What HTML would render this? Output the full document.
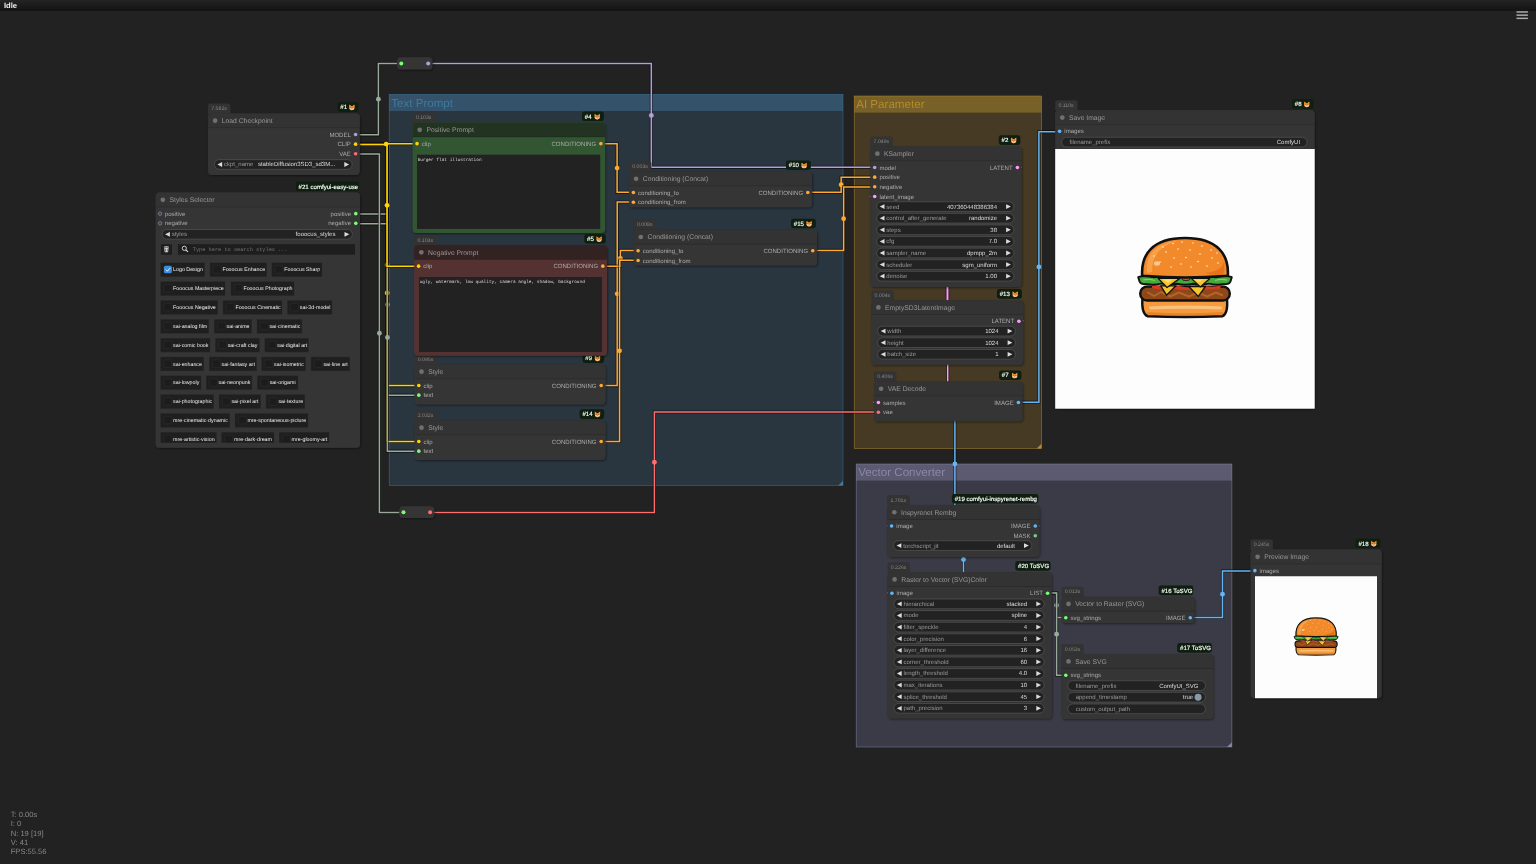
<!DOCTYPE html><html><head><meta charset="utf-8"><style>html,body{margin:0;padding:0;background:#222;overflow:hidden;width:1536px;height:864px}svg{display:block;will-change:transform;text-rendering:geometricPrecision}</style></head><body>
<svg width="1536" height="864" viewBox="0 0 1536 864">
<defs><filter id="sh" x="-10%" y="-10%" width="120%" height="130%"><feDropShadow dx="0.8" dy="1" stdDeviation="1.2" flood-color="#000" flood-opacity="0.45"/></filter><linearGradient id="topbar" x1="0" y1="0" x2="0" y2="1"><stop offset="0" stop-color="#242424"/><stop offset="1" stop-color="#121212"/></linearGradient><clipPath id="stylesclip"><rect x="156" y="240" width="204" height="202.8"/></clipPath></defs>
<rect width="1536" height="864" fill="#222"/>
<rect x="389.2" y="94.4" width="453.8" height="391.1" fill="#29353f"/>
<rect x="389.2" y="94.4" width="453.8" height="16.6" fill="#34536a"/>
<rect x="389.2" y="94.4" width="453.8" height="391.1" fill="none" stroke="#3f789e" stroke-width="0.6" stroke-opacity="0.8"/>
<path d="M843.0 485.5 l-4.8 0 l4.8 -4.8z" fill="#3f789e"/>
<text x="391.20" y="106.80" font-size="11.60" fill="#3f789e" text-anchor="start" font-family='"Liberation Sans", sans-serif' font-weight="normal" >Text Prompt</text>
<rect x="854.2" y="96.0" width="187.3" height="352.5" fill="#463a24"/>
<rect x="854.2" y="96.0" width="187.3" height="16.6" fill="#786128"/>
<rect x="854.2" y="96.0" width="187.3" height="352.5" fill="none" stroke="#b58b2a" stroke-width="0.6" stroke-opacity="0.8"/>
<path d="M1041.5 448.5 l-4.8 0 l4.8 -4.8z" fill="#b58b2a"/>
<text x="856.20" y="108.40" font-size="11.60" fill="#b58b2a" text-anchor="start" font-family='"Liberation Sans", sans-serif' font-weight="normal" >AI Parameter</text>
<rect x="856.2" y="464.0" width="375.7" height="283.0" fill="#3b3b47"/>
<rect x="856.2" y="464.0" width="375.7" height="16.6" fill="#5c5a70"/>
<rect x="856.2" y="464.0" width="375.7" height="283.0" fill="none" stroke="#8888aa" stroke-width="0.6" stroke-opacity="0.8"/>
<path d="M1231.9 747.0 l-4.8 0 l4.8 -4.8z" fill="#8888aa"/>
<text x="858.20" y="476.40" font-size="11.60" fill="#8888aa" text-anchor="start" font-family='"Liberation Sans", sans-serif' font-weight="normal" >Vector Converter</text>
<path d="M428.50 63.50 L433.33 63.50 L651.35 63.50 L651.35 167.30 L869.37 167.30 L874.20 167.30" fill="none" stroke="rgba(0,0,0,0.5)" stroke-width="3.2" stroke-linejoin="miter"/>
<path d="M428.50 63.50 L433.33 63.50 L651.35 63.50 L651.35 167.30 L869.37 167.30 L874.20 167.30" fill="none" stroke="#b39ddb" stroke-width="1.5" stroke-linejoin="miter"/>
<circle cx="651.35" cy="115.40" r="2.4" fill="#b39ddb"/>
<path d="M355.50 134.80 L360.33 134.80 L378.40 134.80 L378.40 63.50 L396.47 63.50 L401.30 63.50" fill="none" stroke="rgba(0,0,0,0.5)" stroke-width="3.2" stroke-linejoin="miter"/>
<path d="M355.50 134.80 L360.33 134.80 L378.40 134.80 L378.40 63.50 L396.47 63.50 L401.30 63.50" fill="none" stroke="#99aa99" stroke-width="1.5" stroke-linejoin="miter"/>
<circle cx="378.40" cy="99.15" r="2.4" fill="#99aa99"/>
<path d="M355.50 144.40 L360.33 144.40 L387.15 144.40 L387.15 385.60 L413.97 385.60 L418.80 385.60" fill="none" stroke="rgba(0,0,0,0.5)" stroke-width="3.2" stroke-linejoin="miter"/>
<path d="M355.50 144.40 L360.33 144.40 L387.15 144.40 L387.15 385.60 L413.97 385.60 L418.80 385.60" fill="none" stroke="#ffd500" stroke-width="1.5" stroke-linejoin="miter"/>
<circle cx="387.15" cy="265.00" r="2.4" fill="#ffd500"/>
<path d="M356.00 214.00 L360.83 214.00 L387.40 214.00 L387.40 395.20 L413.97 395.20 L418.80 395.20" fill="none" stroke="rgba(0,0,0,0.5)" stroke-width="3.2" stroke-linejoin="miter"/>
<path d="M356.00 214.00 L360.83 214.00 L387.40 214.00 L387.40 395.20 L413.97 395.20 L418.80 395.20" fill="none" stroke="#99aa99" stroke-width="1.5" stroke-linejoin="miter"/>
<circle cx="387.40" cy="304.60" r="2.4" fill="#99aa99"/>
<path d="M355.50 144.40 L360.33 144.40 L387.15 144.40 L387.15 441.50 L413.97 441.50 L418.80 441.50" fill="none" stroke="rgba(0,0,0,0.5)" stroke-width="3.2" stroke-linejoin="miter"/>
<path d="M355.50 144.40 L360.33 144.40 L387.15 144.40 L387.15 441.50 L413.97 441.50 L418.80 441.50" fill="none" stroke="#ffd500" stroke-width="1.5" stroke-linejoin="miter"/>
<circle cx="387.15" cy="292.95" r="2.4" fill="#ffd500"/>
<path d="M356.00 223.80 L360.83 223.80 L387.40 223.80 L387.40 451.20 L413.97 451.20 L418.80 451.20" fill="none" stroke="rgba(0,0,0,0.5)" stroke-width="3.2" stroke-linejoin="miter"/>
<path d="M356.00 223.80 L360.83 223.80 L387.40 223.80 L387.40 451.20 L413.97 451.20 L418.80 451.20" fill="none" stroke="#99aa99" stroke-width="1.5" stroke-linejoin="miter"/>
<circle cx="387.40" cy="337.50" r="2.4" fill="#99aa99"/>
<path d="M355.50 144.40 L360.33 144.40 L387.05 144.40 L387.05 266.20 L413.77 266.20 L418.60 266.20" fill="none" stroke="rgba(0,0,0,0.5)" stroke-width="3.2" stroke-linejoin="miter"/>
<path d="M355.50 144.40 L360.33 144.40 L387.05 144.40 L387.05 266.20 L413.77 266.20 L418.60 266.20" fill="none" stroke="#ffd500" stroke-width="1.5" stroke-linejoin="miter"/>
<circle cx="387.05" cy="205.30" r="2.4" fill="#ffd500"/>
<path d="M355.50 144.40 L360.33 144.40 L386.20 144.40 L386.20 143.75 L412.07 143.75 L416.90 143.75" fill="none" stroke="rgba(0,0,0,0.5)" stroke-width="3.2" stroke-linejoin="miter"/>
<path d="M355.50 144.40 L360.33 144.40 L386.20 144.40 L386.20 143.75 L412.07 143.75 L416.90 143.75" fill="none" stroke="#ffd500" stroke-width="1.5" stroke-linejoin="miter"/>
<circle cx="386.20" cy="144.07" r="2.4" fill="#ffd500"/>
<path d="M355.50 154.00 L360.33 154.00 L379.40 154.00 L379.40 512.50 L398.47 512.50 L403.30 512.50" fill="none" stroke="rgba(0,0,0,0.5)" stroke-width="3.2" stroke-linejoin="miter"/>
<path d="M355.50 154.00 L360.33 154.00 L379.40 154.00 L379.40 512.50 L398.47 512.50 L403.30 512.50" fill="none" stroke="#99aa99" stroke-width="1.5" stroke-linejoin="miter"/>
<circle cx="379.40" cy="333.25" r="2.4" fill="#99aa99"/>
<path d="M430.40 512.50 L435.23 512.50 L654.40 512.50 L654.40 412.00 L873.57 412.00 L878.40 412.00" fill="none" stroke="rgba(0,0,0,0.5)" stroke-width="3.2" stroke-linejoin="miter"/>
<path d="M430.40 512.50 L435.23 512.50 L654.40 512.50 L654.40 412.00 L873.57 412.00 L878.40 412.00" fill="none" stroke="#ff6e6e" stroke-width="1.5" stroke-linejoin="miter"/>
<circle cx="654.40" cy="462.25" r="2.4" fill="#ff6e6e"/>
<path d="M600.80 143.75 L605.63 143.75 L617.10 143.75 L617.10 192.30 L628.57 192.30 L633.40 192.30" fill="none" stroke="rgba(0,0,0,0.5)" stroke-width="3.2" stroke-linejoin="miter"/>
<path d="M600.80 143.75 L605.63 143.75 L617.10 143.75 L617.10 192.30 L628.57 192.30 L633.40 192.30" fill="none" stroke="#ffa931" stroke-width="1.5" stroke-linejoin="miter"/>
<circle cx="617.10" cy="168.03" r="2.4" fill="#ffa931"/>
<path d="M601.00 385.60 L605.83 385.60 L617.20 385.60 L617.20 202.00 L628.57 202.00 L633.40 202.00" fill="none" stroke="rgba(0,0,0,0.5)" stroke-width="3.2" stroke-linejoin="miter"/>
<path d="M601.00 385.60 L605.83 385.60 L617.20 385.60 L617.20 202.00 L628.57 202.00 L633.40 202.00" fill="none" stroke="#ffa931" stroke-width="1.5" stroke-linejoin="miter"/>
<circle cx="617.20" cy="293.80" r="2.4" fill="#ffa931"/>
<path d="M602.70 266.20 L607.53 266.20 L620.40 266.20 L620.40 250.40 L633.27 250.40 L638.10 250.40" fill="none" stroke="rgba(0,0,0,0.5)" stroke-width="3.2" stroke-linejoin="miter"/>
<path d="M602.70 266.20 L607.53 266.20 L620.40 266.20 L620.40 250.40 L633.27 250.40 L638.10 250.40" fill="none" stroke="#ffa931" stroke-width="1.5" stroke-linejoin="miter"/>
<circle cx="620.40" cy="258.30" r="2.4" fill="#ffa931"/>
<path d="M601.00 441.50 L605.83 441.50 L619.55 441.50 L619.55 260.20 L633.27 260.20 L638.10 260.20" fill="none" stroke="rgba(0,0,0,0.5)" stroke-width="3.2" stroke-linejoin="miter"/>
<path d="M601.00 441.50 L605.83 441.50 L619.55 441.50 L619.55 260.20 L633.27 260.20 L638.10 260.20" fill="none" stroke="#ffa931" stroke-width="1.5" stroke-linejoin="miter"/>
<circle cx="619.55" cy="350.85" r="2.4" fill="#ffa931"/>
<path d="M807.60 192.30 L812.43 192.30 L841.15 192.30 L841.15 177.20 L869.87 177.20 L874.70 177.20" fill="none" stroke="rgba(0,0,0,0.5)" stroke-width="3.2" stroke-linejoin="miter"/>
<path d="M807.60 192.30 L812.43 192.30 L841.15 192.30 L841.15 177.20 L869.87 177.20 L874.70 177.20" fill="none" stroke="#ffa931" stroke-width="1.5" stroke-linejoin="miter"/>
<circle cx="841.15" cy="184.75" r="2.4" fill="#ffa931"/>
<path d="M812.60 250.40 L817.43 250.40 L843.65 250.40 L843.65 186.90 L869.87 186.90 L874.70 186.90" fill="none" stroke="rgba(0,0,0,0.5)" stroke-width="3.2" stroke-linejoin="miter"/>
<path d="M812.60 250.40 L817.43 250.40 L843.65 250.40 L843.65 186.90 L869.87 186.90 L874.70 186.90" fill="none" stroke="#ffa931" stroke-width="1.5" stroke-linejoin="miter"/>
<circle cx="843.65" cy="218.65" r="2.4" fill="#ffa931"/>
<path d="M1018.60 320.70 L1023.43 320.70 L946.65 320.70 L946.65 196.40 L869.87 196.40 L874.70 196.40" fill="none" stroke="rgba(0,0,0,0.5)" stroke-width="3.2" stroke-linejoin="miter"/>
<path d="M1018.60 320.70 L1023.43 320.70 L946.65 320.70 L946.65 196.40 L869.87 196.40 L874.70 196.40" fill="none" stroke="#ff9cf9" stroke-width="1.5" stroke-linejoin="miter"/>
<circle cx="946.65" cy="258.55" r="2.4" fill="#ff9cf9"/>
<path d="M1017.00 167.30 L1021.83 167.30 L947.70 167.30 L947.70 402.20 L873.57 402.20 L878.40 402.20" fill="none" stroke="rgba(0,0,0,0.5)" stroke-width="3.2" stroke-linejoin="miter"/>
<path d="M1017.00 167.30 L1021.83 167.30 L947.70 167.30 L947.70 402.20 L873.57 402.20 L878.40 402.20" fill="none" stroke="#ff9cf9" stroke-width="1.5" stroke-linejoin="miter"/>
<circle cx="947.70" cy="284.75" r="2.4" fill="#ff9cf9"/>
<path d="M1018.20 402.20 L1023.03 402.20 L1038.90 402.20 L1038.90 131.70 L1054.77 131.70 L1059.60 131.70" fill="none" stroke="rgba(0,0,0,0.5)" stroke-width="3.2" stroke-linejoin="miter"/>
<path d="M1018.20 402.20 L1023.03 402.20 L1038.90 402.20 L1038.90 131.70 L1054.77 131.70 L1059.60 131.70" fill="none" stroke="#64b5f6" stroke-width="1.5" stroke-linejoin="miter"/>
<circle cx="1038.90" cy="266.95" r="2.4" fill="#64b5f6"/>
<path d="M1018.20 402.20 L1023.03 402.20 L954.90 402.20 L954.90 525.80 L886.77 525.80 L891.60 525.80" fill="none" stroke="rgba(0,0,0,0.5)" stroke-width="3.2" stroke-linejoin="miter"/>
<path d="M1018.20 402.20 L1023.03 402.20 L954.90 402.20 L954.90 525.80 L886.77 525.80 L891.60 525.80" fill="none" stroke="#64b5f6" stroke-width="1.5" stroke-linejoin="miter"/>
<circle cx="954.90" cy="464.00" r="2.4" fill="#64b5f6"/>
<path d="M1035.10 525.80 L1039.93 525.80 L963.50 525.80 L963.50 593.10 L887.07 593.10 L891.90 593.10" fill="none" stroke="rgba(0,0,0,0.5)" stroke-width="3.2" stroke-linejoin="miter"/>
<path d="M1035.10 525.80 L1039.93 525.80 L963.50 525.80 L963.50 593.10 L887.07 593.10 L891.90 593.10" fill="none" stroke="#64b5f6" stroke-width="1.5" stroke-linejoin="miter"/>
<circle cx="963.50" cy="559.45" r="2.4" fill="#64b5f6"/>
<path d="M1047.40 593.10 L1052.23 593.10 L1056.60 593.10 L1056.60 617.50 L1060.97 617.50 L1065.80 617.50" fill="none" stroke="rgba(0,0,0,0.5)" stroke-width="3.2" stroke-linejoin="miter"/>
<path d="M1047.40 593.10 L1052.23 593.10 L1056.60 593.10 L1056.60 617.50 L1060.97 617.50 L1065.80 617.50" fill="none" stroke="#99aa99" stroke-width="1.5" stroke-linejoin="miter"/>
<circle cx="1056.60" cy="605.30" r="2.4" fill="#99aa99"/>
<path d="M1047.40 593.10 L1052.23 593.10 L1056.60 593.10 L1056.60 675.30 L1060.97 675.30 L1065.80 675.30" fill="none" stroke="rgba(0,0,0,0.5)" stroke-width="3.2" stroke-linejoin="miter"/>
<path d="M1047.40 593.10 L1052.23 593.10 L1056.60 593.10 L1056.60 675.30 L1060.97 675.30 L1065.80 675.30" fill="none" stroke="#99aa99" stroke-width="1.5" stroke-linejoin="miter"/>
<circle cx="1056.60" cy="634.20" r="2.4" fill="#99aa99"/>
<path d="M1190.10 617.50 L1194.93 617.50 L1222.50 617.50 L1222.50 570.90 L1250.07 570.90 L1254.90 570.90" fill="none" stroke="rgba(0,0,0,0.5)" stroke-width="3.2" stroke-linejoin="miter"/>
<path d="M1190.10 617.50 L1194.93 617.50 L1222.50 617.50 L1222.50 570.90 L1250.07 570.90 L1254.90 570.90" fill="none" stroke="#64b5f6" stroke-width="1.5" stroke-linejoin="miter"/>
<circle cx="1222.50" cy="594.20" r="2.4" fill="#64b5f6"/>
<rect x="397.00" y="57.30" width="35.50" height="12.30" rx="3.9" fill="#353535" filter="url(#sh)"/>
<circle cx="401.30" cy="63.45" r="2.0" fill="#7f7"/>
<circle cx="428.20" cy="63.45" r="2.0" fill="#b39ddb"/>
<rect x="399.20" y="506.30" width="35.20" height="11.70" rx="3.9" fill="#353535" filter="url(#sh)"/>
<circle cx="403.50" cy="512.15" r="2.0" fill="#7f7"/>
<circle cx="430.10" cy="512.15" r="2.0" fill="#ff6e6e"/>
<path d="M208.00 113.90 L208.00 105.40 Q208.00 103.40 210.00 103.40 L228.40 103.40 Q230.40 103.40 230.40 105.40 L230.40 113.90Z" fill="#333"/>
<text x="211.30" y="110.10" font-size="5.20" fill="#888" text-anchor="start" font-family='"Liberation Sans", sans-serif' font-weight="normal" >7.582s</text>
<rect x="337.50" y="102.30" width="21.10" height="9.6" rx="2.4" fill="#0f1f0f"/>
<text x="340.30" y="109.30" font-size="6.10" fill="#fff" text-anchor="start" font-family='"Liberation Sans", sans-serif' font-weight="normal" stroke="#fff" stroke-width="0.15">#1</text>
<g transform="translate(351.90,107.40) scale(0.86)"><path d="M-3.1 -3.3 L-0.7 -1.6 L0.7 -1.6 L3.1 -3.3 L3.2 0.2 Q3.1 3.1 0 3.3 Q-3.1 3.1 -3.2 0.2 Z" fill="#f28624"/><path d="M-2.6 -2.5 L-1.3 -1.5 L-2.6 -0.9Z M2.6 -2.5 L1.3 -1.5 L2.6 -0.9Z" fill="#fbb85a"/><path d="M-3.1 0.5 Q-1.6 0.1 0 1.2 Q1.6 0.1 3.1 0.5 Q2.8 3.1 0 3.3 Q-2.8 3.1 -3.1 0.5Z" fill="#f2c6a0"/><circle cx="-1.3" cy="-0.3" r="0.4" fill="#5a2a10"/><circle cx="1.3" cy="-0.3" r="0.4" fill="#5a2a10"/><circle cx="0" cy="1.6" r="0.45" fill="#8a4a5a"/></g>
<rect x="208.00" y="113.40" width="151.80" height="61.60" rx="3.9" fill="#353535" filter="url(#sh)"/>
<path d="M208.00 127.90 L208.00 117.30 Q208.00 113.40 211.90 113.40 L355.90 113.40 Q359.80 113.40 359.80 117.30 L359.80 127.90Z" fill="#333"/>
<rect x="208.00" y="127.40" width="151.80" height="0.8" fill="rgba(0,0,0,0.18)"/>
<circle cx="215.10" cy="120.65" r="2.35" fill="#707070"/>
<text x="221.80" y="123.10" font-size="6.77" fill="#999" text-anchor="start" font-family='"Liberation Sans", sans-serif' font-weight="normal" >Load Checkpoint</text>
<circle cx="355.60" cy="134.47" r="1.8" fill="#b39ddb"/>
<text x="350.90" y="136.57" font-size="6.05" fill="#aaa" text-anchor="end" font-family='"Liberation Sans", sans-serif' font-weight="normal" >MODEL</text>
<circle cx="355.60" cy="144.13" r="1.8" fill="#ffd500"/>
<text x="350.90" y="146.23" font-size="6.05" fill="#aaa" text-anchor="end" font-family='"Liberation Sans", sans-serif' font-weight="normal" >CLIP</text>
<circle cx="355.60" cy="153.80" r="1.8" fill="#ff6e6e"/>
<text x="350.90" y="155.90" font-size="6.05" fill="#aaa" text-anchor="end" font-family='"Liberation Sans", sans-serif' font-weight="normal" >VAE</text>
<rect x="214.40" y="159.67" width="137.70" height="9.67" rx="4.83" fill="#222" stroke="#666" stroke-width="0.5"/>
<path d="M222.20 162.08 L217.40 164.50 L222.20 166.92Z" fill="#ddd"/>
<path d="M344.30 162.08 L349.10 164.50 L344.30 166.92Z" fill="#ddd"/>
<text x="224.00" y="166.43" font-size="6.00" fill="#999" text-anchor="start" font-family='"Liberation Sans", sans-serif' font-weight="normal" >ckpt_name</text>
<text x="335.20" y="166.43" font-size="6.00" fill="#ddd" text-anchor="end" font-family='"Liberation Sans", sans-serif' font-weight="normal" >stableDiffusion3SD3_sd3M...</text>
<rect x="295.80" y="181.50" width="63.00" height="9.6" rx="2.4" fill="#0f1f0f"/>
<text x="298.60" y="188.50" font-size="6.10" fill="#fff" text-anchor="start" font-family='"Liberation Sans", sans-serif' font-weight="normal" stroke="#fff" stroke-width="0.15">#21 comfyui-easy-use</text>
<rect x="155.70" y="192.60" width="204.30" height="255.20" rx="3.9" fill="#353535" filter="url(#sh)"/>
<path d="M155.70 207.10 L155.70 196.50 Q155.70 192.60 159.60 192.60 L356.10 192.60 Q360.00 192.60 360.00 196.50 L360.00 207.10Z" fill="#333"/>
<rect x="155.70" y="206.60" width="204.30" height="0.8" fill="rgba(0,0,0,0.18)"/>
<circle cx="162.80" cy="199.85" r="2.35" fill="#707070"/>
<text x="169.50" y="202.30" font-size="6.77" fill="#999" text-anchor="start" font-family='"Liberation Sans", sans-serif' font-weight="normal" >Styles Selector</text>
<circle cx="160.10" cy="213.67" r="1.75" fill="#445" stroke="#778" stroke-width="0.9"/>
<text x="164.80" y="215.77" font-size="6.05" fill="#aaa" text-anchor="start" font-family='"Liberation Sans", sans-serif' font-weight="normal" >positive</text>
<circle cx="160.10" cy="223.33" r="1.75" fill="#445" stroke="#778" stroke-width="0.9"/>
<text x="164.80" y="225.43" font-size="6.05" fill="#aaa" text-anchor="start" font-family='"Liberation Sans", sans-serif' font-weight="normal" >negative</text>
<circle cx="355.80" cy="213.67" r="1.8" fill="#7f7"/>
<text x="351.10" y="215.77" font-size="6.05" fill="#aaa" text-anchor="end" font-family='"Liberation Sans", sans-serif' font-weight="normal" >positive</text>
<circle cx="355.80" cy="223.33" r="1.8" fill="#7f7"/>
<text x="351.10" y="225.43" font-size="6.05" fill="#aaa" text-anchor="end" font-family='"Liberation Sans", sans-serif' font-weight="normal" >negative</text>
<rect x="162.10" y="229.47" width="190.20" height="9.67" rx="4.83" fill="#222" stroke="#666" stroke-width="0.5"/>
<path d="M169.90 231.88 L165.10 234.30 L169.90 236.72Z" fill="#ddd"/>
<path d="M344.50 231.88 L349.30 234.30 L344.50 236.72Z" fill="#ddd"/>
<text x="171.70" y="236.23" font-size="6.00" fill="#999" text-anchor="start" font-family='"Liberation Sans", sans-serif' font-weight="normal" >styles</text>
<text x="335.40" y="236.23" font-size="6.00" fill="#ddd" text-anchor="end" font-family='"Liberation Sans", sans-serif' font-weight="normal" >fooocus_styles</text>
<rect x="160.9" y="244.2" width="11.1" height="10.5" fill="#1e1e1e"/>
<g fill="#ddd"><rect x="163.9" y="246.6" width="5" height="0.9"/><rect x="165.6" y="246.1" width="1.6" height="0.7"/><path d="M164.3 247.9 L168.5 247.9 L168.1 252.3 L164.7 252.3Z"/></g>
<g fill="#1e1e1e"><rect x="165.3" y="248.6" width="0.5" height="3"/><rect x="166.9" y="248.6" width="0.5" height="3"/></g>
<rect x="177.9" y="244.2" width="177.1" height="10.5" fill="#1e1e1e"/>
<g stroke="#ddd" fill="none" stroke-width="0.9"><circle cx="184.3" cy="248.3" r="2.1"/><path d="M185.8 249.8 L187.9 251.9" stroke-width="1.2"/></g>
<text x="192.80" y="251.30" font-size="5.28" fill="#777" text-anchor="start" font-family='"Liberation Mono", monospace' font-weight="normal" >Type here to search styles ...</text>
<g clip-path="url(#stylesclip)">
<rect x="160.70" y="262.90" width="43.90" height="13.8" fill="#1f1f1f" stroke="#2a2a2a" stroke-width="0.4"/>
<rect x="163.90" y="265.70" width="8" height="7.6" rx="1.6" fill="#3a8fd9"/>
<path d="M165.70 269.60 L167.40 271.20 L170.30 267.90" fill="none" stroke="#fff" stroke-width="0.9"/>
<text x="173.10" y="271.40" font-size="5.30" fill="#eeeeee" text-anchor="start" font-family='"Liberation Sans", sans-serif' font-weight="normal" >Logo Design</text>
<rect x="210.00" y="262.90" width="56.70" height="13.8" fill="#1f1f1f" stroke="#2a2a2a" stroke-width="0.4"/>
<rect x="213.20" y="265.70" width="8" height="7.6" rx="1.6" fill="#1c1c1c" stroke="#333" stroke-width="0.5"/>
<text x="222.40" y="271.40" font-size="5.30" fill="#eeeeee" text-anchor="start" font-family='"Liberation Sans", sans-serif' font-weight="normal" >Fooocus Enhance</text>
<rect x="271.90" y="262.90" width="50.10" height="13.8" fill="#1f1f1f" stroke="#2a2a2a" stroke-width="0.4"/>
<rect x="275.10" y="265.70" width="8" height="7.6" rx="1.6" fill="#1c1c1c" stroke="#333" stroke-width="0.5"/>
<text x="284.30" y="271.40" font-size="5.30" fill="#eeeeee" text-anchor="start" font-family='"Liberation Sans", sans-serif' font-weight="normal" >Fooocus Sharp</text>
<rect x="160.70" y="281.73" width="64.30" height="13.8" fill="#1f1f1f" stroke="#2a2a2a" stroke-width="0.4"/>
<rect x="163.90" y="284.53" width="8" height="7.6" rx="1.6" fill="#1c1c1c" stroke="#333" stroke-width="0.5"/>
<text x="173.10" y="290.23" font-size="5.30" fill="#eeeeee" text-anchor="start" font-family='"Liberation Sans", sans-serif' font-weight="normal" >Fooocus Masterpiece</text>
<rect x="231.00" y="281.73" width="63.00" height="13.8" fill="#1f1f1f" stroke="#2a2a2a" stroke-width="0.4"/>
<rect x="234.20" y="284.53" width="8" height="7.6" rx="1.6" fill="#1c1c1c" stroke="#333" stroke-width="0.5"/>
<text x="243.40" y="290.23" font-size="5.30" fill="#eeeeee" text-anchor="start" font-family='"Liberation Sans", sans-serif' font-weight="normal" >Fooocus Photograph</text>
<rect x="160.70" y="300.56" width="57.00" height="13.8" fill="#1f1f1f" stroke="#2a2a2a" stroke-width="0.4"/>
<rect x="163.90" y="303.36" width="8" height="7.6" rx="1.6" fill="#1c1c1c" stroke="#333" stroke-width="0.5"/>
<text x="173.10" y="309.06" font-size="5.30" fill="#eeeeee" text-anchor="start" font-family='"Liberation Sans", sans-serif' font-weight="normal" >Fooocus Negative</text>
<rect x="223.00" y="300.56" width="59.00" height="13.8" fill="#1f1f1f" stroke="#2a2a2a" stroke-width="0.4"/>
<rect x="226.20" y="303.36" width="8" height="7.6" rx="1.6" fill="#1c1c1c" stroke="#333" stroke-width="0.5"/>
<text x="235.40" y="309.06" font-size="5.30" fill="#eeeeee" text-anchor="start" font-family='"Liberation Sans", sans-serif' font-weight="normal" >Fooocus Cinematic</text>
<rect x="287.40" y="300.56" width="44.60" height="13.8" fill="#1f1f1f" stroke="#2a2a2a" stroke-width="0.4"/>
<rect x="290.60" y="303.36" width="8" height="7.6" rx="1.6" fill="#1c1c1c" stroke="#333" stroke-width="0.5"/>
<text x="299.80" y="309.06" font-size="5.30" fill="#eeeeee" text-anchor="start" font-family='"Liberation Sans", sans-serif' font-weight="normal" >sai-3d-model</text>
<rect x="160.70" y="319.39" width="48.10" height="13.8" fill="#1f1f1f" stroke="#2a2a2a" stroke-width="0.4"/>
<rect x="163.90" y="322.19" width="8" height="7.6" rx="1.6" fill="#1c1c1c" stroke="#333" stroke-width="0.5"/>
<text x="173.10" y="327.89" font-size="5.30" fill="#eeeeee" text-anchor="start" font-family='"Liberation Sans", sans-serif' font-weight="normal" >sai-analog film</text>
<rect x="214.20" y="319.39" width="37.40" height="13.8" fill="#1f1f1f" stroke="#2a2a2a" stroke-width="0.4"/>
<rect x="217.40" y="322.19" width="8" height="7.6" rx="1.6" fill="#1c1c1c" stroke="#333" stroke-width="0.5"/>
<text x="226.60" y="327.89" font-size="5.30" fill="#eeeeee" text-anchor="start" font-family='"Liberation Sans", sans-serif' font-weight="normal" >sai-anime</text>
<rect x="257.00" y="319.39" width="44.90" height="13.8" fill="#1f1f1f" stroke="#2a2a2a" stroke-width="0.4"/>
<rect x="260.20" y="322.19" width="8" height="7.6" rx="1.6" fill="#1c1c1c" stroke="#333" stroke-width="0.5"/>
<text x="269.40" y="327.89" font-size="5.30" fill="#eeeeee" text-anchor="start" font-family='"Liberation Sans", sans-serif' font-weight="normal" >sai-cinematic</text>
<rect x="160.70" y="338.22" width="49.30" height="13.8" fill="#1f1f1f" stroke="#2a2a2a" stroke-width="0.4"/>
<rect x="163.90" y="341.02" width="8" height="7.6" rx="1.6" fill="#1c1c1c" stroke="#333" stroke-width="0.5"/>
<text x="173.10" y="346.72" font-size="5.30" fill="#eeeeee" text-anchor="start" font-family='"Liberation Sans", sans-serif' font-weight="normal" >sai-comic book</text>
<rect x="215.30" y="338.22" width="44.10" height="13.8" fill="#1f1f1f" stroke="#2a2a2a" stroke-width="0.4"/>
<rect x="218.50" y="341.02" width="8" height="7.6" rx="1.6" fill="#1c1c1c" stroke="#333" stroke-width="0.5"/>
<text x="227.70" y="346.72" font-size="5.30" fill="#eeeeee" text-anchor="start" font-family='"Liberation Sans", sans-serif' font-weight="normal" >sai-craft clay</text>
<rect x="264.90" y="338.22" width="43.60" height="13.8" fill="#1f1f1f" stroke="#2a2a2a" stroke-width="0.4"/>
<rect x="268.10" y="341.02" width="8" height="7.6" rx="1.6" fill="#1c1c1c" stroke="#333" stroke-width="0.5"/>
<text x="277.30" y="346.72" font-size="5.30" fill="#eeeeee" text-anchor="start" font-family='"Liberation Sans", sans-serif' font-weight="normal" >sai-digital art</text>
<rect x="160.70" y="357.05" width="43.10" height="13.8" fill="#1f1f1f" stroke="#2a2a2a" stroke-width="0.4"/>
<rect x="163.90" y="359.85" width="8" height="7.6" rx="1.6" fill="#1c1c1c" stroke="#333" stroke-width="0.5"/>
<text x="173.10" y="365.55" font-size="5.30" fill="#eeeeee" text-anchor="start" font-family='"Liberation Sans", sans-serif' font-weight="normal" >sai-enhance</text>
<rect x="209.20" y="357.05" width="47.40" height="13.8" fill="#1f1f1f" stroke="#2a2a2a" stroke-width="0.4"/>
<rect x="212.40" y="359.85" width="8" height="7.6" rx="1.6" fill="#1c1c1c" stroke="#333" stroke-width="0.5"/>
<text x="221.60" y="365.55" font-size="5.30" fill="#eeeeee" text-anchor="start" font-family='"Liberation Sans", sans-serif' font-weight="normal" >sai-fantasy art</text>
<rect x="261.70" y="357.05" width="43.90" height="13.8" fill="#1f1f1f" stroke="#2a2a2a" stroke-width="0.4"/>
<rect x="264.90" y="359.85" width="8" height="7.6" rx="1.6" fill="#1c1c1c" stroke="#333" stroke-width="0.5"/>
<text x="274.10" y="365.55" font-size="5.30" fill="#eeeeee" text-anchor="start" font-family='"Liberation Sans", sans-serif' font-weight="normal" >sai-isometric</text>
<rect x="311.00" y="357.05" width="38.70" height="13.8" fill="#1f1f1f" stroke="#2a2a2a" stroke-width="0.4"/>
<rect x="314.20" y="359.85" width="8" height="7.6" rx="1.6" fill="#1c1c1c" stroke="#333" stroke-width="0.5"/>
<text x="323.40" y="365.55" font-size="5.30" fill="#eeeeee" text-anchor="start" font-family='"Liberation Sans", sans-serif' font-weight="normal" >sai-line art</text>
<rect x="160.70" y="375.88" width="40.30" height="13.8" fill="#1f1f1f" stroke="#2a2a2a" stroke-width="0.4"/>
<rect x="163.90" y="378.68" width="8" height="7.6" rx="1.6" fill="#1c1c1c" stroke="#333" stroke-width="0.5"/>
<text x="173.10" y="384.38" font-size="5.30" fill="#eeeeee" text-anchor="start" font-family='"Liberation Sans", sans-serif' font-weight="normal" >sai-lowpoly</text>
<rect x="206.20" y="375.88" width="45.80" height="13.8" fill="#1f1f1f" stroke="#2a2a2a" stroke-width="0.4"/>
<rect x="209.40" y="378.68" width="8" height="7.6" rx="1.6" fill="#1c1c1c" stroke="#333" stroke-width="0.5"/>
<text x="218.60" y="384.38" font-size="5.30" fill="#eeeeee" text-anchor="start" font-family='"Liberation Sans", sans-serif' font-weight="normal" >sai-neonpunk</text>
<rect x="257.30" y="375.88" width="40.70" height="13.8" fill="#1f1f1f" stroke="#2a2a2a" stroke-width="0.4"/>
<rect x="260.50" y="378.68" width="8" height="7.6" rx="1.6" fill="#1c1c1c" stroke="#333" stroke-width="0.5"/>
<text x="269.70" y="384.38" font-size="5.30" fill="#eeeeee" text-anchor="start" font-family='"Liberation Sans", sans-serif' font-weight="normal" >sai-origami</text>
<rect x="160.70" y="394.71" width="53.00" height="13.8" fill="#1f1f1f" stroke="#2a2a2a" stroke-width="0.4"/>
<rect x="163.90" y="397.51" width="8" height="7.6" rx="1.6" fill="#1c1c1c" stroke="#333" stroke-width="0.5"/>
<text x="173.10" y="403.21" font-size="5.30" fill="#eeeeee" text-anchor="start" font-family='"Liberation Sans", sans-serif' font-weight="normal" >sai-photographic</text>
<rect x="219.00" y="394.71" width="41.70" height="13.8" fill="#1f1f1f" stroke="#2a2a2a" stroke-width="0.4"/>
<rect x="222.20" y="397.51" width="8" height="7.6" rx="1.6" fill="#1c1c1c" stroke="#333" stroke-width="0.5"/>
<text x="231.40" y="403.21" font-size="5.30" fill="#eeeeee" text-anchor="start" font-family='"Liberation Sans", sans-serif' font-weight="normal" >sai-pixel art</text>
<rect x="266.00" y="394.71" width="38.80" height="13.8" fill="#1f1f1f" stroke="#2a2a2a" stroke-width="0.4"/>
<rect x="269.20" y="397.51" width="8" height="7.6" rx="1.6" fill="#1c1c1c" stroke="#333" stroke-width="0.5"/>
<text x="278.40" y="403.21" font-size="5.30" fill="#eeeeee" text-anchor="start" font-family='"Liberation Sans", sans-serif' font-weight="normal" >sai-texture</text>
<rect x="160.70" y="413.54" width="69.00" height="13.8" fill="#1f1f1f" stroke="#2a2a2a" stroke-width="0.4"/>
<rect x="163.90" y="416.34" width="8" height="7.6" rx="1.6" fill="#1c1c1c" stroke="#333" stroke-width="0.5"/>
<text x="173.10" y="422.04" font-size="5.30" fill="#eeeeee" text-anchor="start" font-family='"Liberation Sans", sans-serif' font-weight="normal" >mre-cinematic-dynamic</text>
<rect x="235.00" y="413.54" width="73.00" height="13.8" fill="#1f1f1f" stroke="#2a2a2a" stroke-width="0.4"/>
<rect x="238.20" y="416.34" width="8" height="7.6" rx="1.6" fill="#1c1c1c" stroke="#333" stroke-width="0.5"/>
<text x="247.40" y="422.04" font-size="5.30" fill="#eeeeee" text-anchor="start" font-family='"Liberation Sans", sans-serif' font-weight="normal" >mre-spontaneous-picture</text>
<rect x="160.70" y="432.37" width="55.80" height="13.8" fill="#1f1f1f" stroke="#2a2a2a" stroke-width="0.4"/>
<rect x="163.90" y="435.17" width="8" height="7.6" rx="1.6" fill="#1c1c1c" stroke="#333" stroke-width="0.5"/>
<text x="173.10" y="440.87" font-size="5.30" fill="#eeeeee" text-anchor="start" font-family='"Liberation Sans", sans-serif' font-weight="normal" >mre-artistic-vision</text>
<rect x="221.60" y="432.37" width="52.40" height="13.8" fill="#1f1f1f" stroke="#2a2a2a" stroke-width="0.4"/>
<rect x="224.80" y="435.17" width="8" height="7.6" rx="1.6" fill="#1c1c1c" stroke="#333" stroke-width="0.5"/>
<text x="234.00" y="440.87" font-size="5.30" fill="#eeeeee" text-anchor="start" font-family='"Liberation Sans", sans-serif' font-weight="normal" >mre-dark-dream</text>
<rect x="279.20" y="432.37" width="49.80" height="13.8" fill="#1f1f1f" stroke="#2a2a2a" stroke-width="0.4"/>
<rect x="282.40" y="435.17" width="8" height="7.6" rx="1.6" fill="#1c1c1c" stroke="#333" stroke-width="0.5"/>
<text x="291.60" y="440.87" font-size="5.30" fill="#eeeeee" text-anchor="start" font-family='"Liberation Sans", sans-serif' font-weight="normal" >mre-gloomy-art</text>
</g>
<path d="M412.60 123.10 L412.60 114.60 Q412.60 112.60 414.60 112.60 L433.00 112.60 Q435.00 112.60 435.00 114.60 L435.00 123.10Z" fill="#333"/>
<text x="415.90" y="119.30" font-size="5.20" fill="#888" text-anchor="start" font-family='"Liberation Sans", sans-serif' font-weight="normal" >0.103s</text>
<rect x="582.00" y="111.50" width="21.90" height="9.6" rx="2.4" fill="#0f1f0f"/>
<text x="584.80" y="118.50" font-size="6.10" fill="#fff" text-anchor="start" font-family='"Liberation Sans", sans-serif' font-weight="normal" stroke="#fff" stroke-width="0.15">#4</text>
<g transform="translate(597.20,116.60) scale(0.86)"><path d="M-3.1 -3.3 L-0.7 -1.6 L0.7 -1.6 L3.1 -3.3 L3.2 0.2 Q3.1 3.1 0 3.3 Q-3.1 3.1 -3.2 0.2 Z" fill="#f28624"/><path d="M-2.6 -2.5 L-1.3 -1.5 L-2.6 -0.9Z M2.6 -2.5 L1.3 -1.5 L2.6 -0.9Z" fill="#fbb85a"/><path d="M-3.1 0.5 Q-1.6 0.1 0 1.2 Q1.6 0.1 3.1 0.5 Q2.8 3.1 0 3.3 Q-2.8 3.1 -3.1 0.5Z" fill="#f2c6a0"/><circle cx="-1.3" cy="-0.3" r="0.4" fill="#5a2a10"/><circle cx="1.3" cy="-0.3" r="0.4" fill="#5a2a10"/><circle cx="0" cy="1.6" r="0.45" fill="#8a4a5a"/></g>
<rect x="412.60" y="122.60" width="192.50" height="110.40" rx="3.9" fill="#335533" filter="url(#sh)"/>
<path d="M412.60 137.10 L412.60 126.50 Q412.60 122.60 416.50 122.60 L601.20 122.60 Q605.10 122.60 605.10 126.50 L605.10 137.10Z" fill="#223322"/>
<rect x="412.60" y="136.60" width="192.50" height="0.8" fill="rgba(0,0,0,0.18)"/>
<circle cx="419.70" cy="129.85" r="2.35" fill="#707070"/>
<text x="426.40" y="132.30" font-size="6.77" fill="#999" text-anchor="start" font-family='"Liberation Sans", sans-serif' font-weight="normal" >Positive Prompt</text>
<circle cx="417.00" cy="143.67" r="1.8" fill="#ffd500"/>
<text x="421.70" y="145.77" font-size="6.05" fill="#aaa" text-anchor="start" font-family='"Liberation Sans", sans-serif' font-weight="normal" >clip</text>
<circle cx="600.90" cy="143.67" r="1.8" fill="#ffa931"/>
<text x="596.20" y="145.77" font-size="6.05" fill="#aaa" text-anchor="end" font-family='"Liberation Sans", sans-serif' font-weight="normal" >CONDITIONING</text>
<rect x="417.0" y="154.7" width="183.2" height="74.2" fill="#222"/>
<text x="417.70" y="160.60" font-size="4.45" fill="#ddd" text-anchor="start" font-family='"Liberation Mono", monospace' font-weight="normal" >burger flat illustration</text>
<path d="M414.40 364.90 L414.40 356.40 Q414.40 354.40 416.40 354.40 L434.80 354.40 Q436.80 354.40 436.80 356.40 L436.80 364.90Z" fill="#333"/>
<text x="417.70" y="361.10" font-size="5.20" fill="#888" text-anchor="start" font-family='"Liberation Sans", sans-serif' font-weight="normal" >0.095s</text>
<rect x="582.50" y="353.30" width="21.70" height="9.6" rx="2.4" fill="#0f1f0f"/>
<text x="585.30" y="360.30" font-size="6.10" fill="#fff" text-anchor="start" font-family='"Liberation Sans", sans-serif' font-weight="normal" stroke="#fff" stroke-width="0.15">#9</text>
<g transform="translate(597.50,358.40) scale(0.86)"><path d="M-3.1 -3.3 L-0.7 -1.6 L0.7 -1.6 L3.1 -3.3 L3.2 0.2 Q3.1 3.1 0 3.3 Q-3.1 3.1 -3.2 0.2 Z" fill="#f28624"/><path d="M-2.6 -2.5 L-1.3 -1.5 L-2.6 -0.9Z M2.6 -2.5 L1.3 -1.5 L2.6 -0.9Z" fill="#fbb85a"/><path d="M-3.1 0.5 Q-1.6 0.1 0 1.2 Q1.6 0.1 3.1 0.5 Q2.8 3.1 0 3.3 Q-2.8 3.1 -3.1 0.5Z" fill="#f2c6a0"/><circle cx="-1.3" cy="-0.3" r="0.4" fill="#5a2a10"/><circle cx="1.3" cy="-0.3" r="0.4" fill="#5a2a10"/><circle cx="0" cy="1.6" r="0.45" fill="#8a4a5a"/></g>
<rect x="414.40" y="364.40" width="191.00" height="40.00" rx="3.9" fill="#353535" filter="url(#sh)"/>
<path d="M414.40 378.90 L414.40 368.30 Q414.40 364.40 418.30 364.40 L601.50 364.40 Q605.40 364.40 605.40 368.30 L605.40 378.90Z" fill="#333"/>
<rect x="414.40" y="378.40" width="191.00" height="0.8" fill="rgba(0,0,0,0.18)"/>
<circle cx="421.50" cy="371.65" r="2.35" fill="#707070"/>
<text x="428.20" y="374.10" font-size="6.77" fill="#999" text-anchor="start" font-family='"Liberation Sans", sans-serif' font-weight="normal" >Style</text>
<circle cx="418.80" cy="385.47" r="1.8" fill="#ffd500"/>
<text x="423.50" y="387.57" font-size="6.05" fill="#aaa" text-anchor="start" font-family='"Liberation Sans", sans-serif' font-weight="normal" >clip</text>
<circle cx="418.80" cy="395.13" r="1.8" fill="#7f7"/>
<text x="423.50" y="397.23" font-size="6.05" fill="#aaa" text-anchor="start" font-family='"Liberation Sans", sans-serif' font-weight="normal" >text</text>
<circle cx="601.20" cy="385.47" r="1.8" fill="#ffa931"/>
<text x="596.50" y="387.57" font-size="6.05" fill="#aaa" text-anchor="end" font-family='"Liberation Sans", sans-serif' font-weight="normal" >CONDITIONING</text>
<path d="M414.40 420.90 L414.40 412.40 Q414.40 410.40 416.40 410.40 L434.80 410.40 Q436.80 410.40 436.80 412.40 L436.80 420.90Z" fill="#333"/>
<text x="417.70" y="417.10" font-size="5.20" fill="#888" text-anchor="start" font-family='"Liberation Sans", sans-serif' font-weight="normal" >2.032s</text>
<rect x="579.60" y="409.30" width="24.60" height="9.6" rx="2.4" fill="#0f1f0f"/>
<text x="582.40" y="416.30" font-size="6.10" fill="#fff" text-anchor="start" font-family='"Liberation Sans", sans-serif' font-weight="normal" stroke="#fff" stroke-width="0.15">#14</text>
<g transform="translate(597.50,414.40) scale(0.86)"><path d="M-3.1 -3.3 L-0.7 -1.6 L0.7 -1.6 L3.1 -3.3 L3.2 0.2 Q3.1 3.1 0 3.3 Q-3.1 3.1 -3.2 0.2 Z" fill="#f28624"/><path d="M-2.6 -2.5 L-1.3 -1.5 L-2.6 -0.9Z M2.6 -2.5 L1.3 -1.5 L2.6 -0.9Z" fill="#fbb85a"/><path d="M-3.1 0.5 Q-1.6 0.1 0 1.2 Q1.6 0.1 3.1 0.5 Q2.8 3.1 0 3.3 Q-2.8 3.1 -3.1 0.5Z" fill="#f2c6a0"/><circle cx="-1.3" cy="-0.3" r="0.4" fill="#5a2a10"/><circle cx="1.3" cy="-0.3" r="0.4" fill="#5a2a10"/><circle cx="0" cy="1.6" r="0.45" fill="#8a4a5a"/></g>
<rect x="414.40" y="420.40" width="191.00" height="39.60" rx="3.9" fill="#353535" filter="url(#sh)"/>
<path d="M414.40 434.90 L414.40 424.30 Q414.40 420.40 418.30 420.40 L601.50 420.40 Q605.40 420.40 605.40 424.30 L605.40 434.90Z" fill="#333"/>
<rect x="414.40" y="434.40" width="191.00" height="0.8" fill="rgba(0,0,0,0.18)"/>
<circle cx="421.50" cy="427.65" r="2.35" fill="#707070"/>
<text x="428.20" y="430.10" font-size="6.77" fill="#999" text-anchor="start" font-family='"Liberation Sans", sans-serif' font-weight="normal" >Style</text>
<circle cx="418.80" cy="441.47" r="1.8" fill="#ffd500"/>
<text x="423.50" y="443.57" font-size="6.05" fill="#aaa" text-anchor="start" font-family='"Liberation Sans", sans-serif' font-weight="normal" >clip</text>
<circle cx="418.80" cy="451.13" r="1.8" fill="#7f7"/>
<text x="423.50" y="453.23" font-size="6.05" fill="#aaa" text-anchor="start" font-family='"Liberation Sans", sans-serif' font-weight="normal" >text</text>
<circle cx="601.20" cy="441.47" r="1.8" fill="#ffa931"/>
<text x="596.50" y="443.57" font-size="6.05" fill="#aaa" text-anchor="end" font-family='"Liberation Sans", sans-serif' font-weight="normal" >CONDITIONING</text>
<path d="M414.20 245.60 L414.20 237.10 Q414.20 235.10 416.20 235.10 L434.60 235.10 Q436.60 235.10 436.60 237.10 L436.60 245.60Z" fill="#333"/>
<text x="417.50" y="241.80" font-size="5.20" fill="#888" text-anchor="start" font-family='"Liberation Sans", sans-serif' font-weight="normal" >0.103s</text>
<rect x="584.30" y="234.00" width="21.50" height="9.6" rx="2.4" fill="#0f1f0f"/>
<text x="587.10" y="241.00" font-size="6.10" fill="#fff" text-anchor="start" font-family='"Liberation Sans", sans-serif' font-weight="normal" stroke="#fff" stroke-width="0.15">#5</text>
<g transform="translate(599.10,239.10) scale(0.86)"><path d="M-3.1 -3.3 L-0.7 -1.6 L0.7 -1.6 L3.1 -3.3 L3.2 0.2 Q3.1 3.1 0 3.3 Q-3.1 3.1 -3.2 0.2 Z" fill="#f28624"/><path d="M-2.6 -2.5 L-1.3 -1.5 L-2.6 -0.9Z M2.6 -2.5 L1.3 -1.5 L2.6 -0.9Z" fill="#fbb85a"/><path d="M-3.1 0.5 Q-1.6 0.1 0 1.2 Q1.6 0.1 3.1 0.5 Q2.8 3.1 0 3.3 Q-2.8 3.1 -3.1 0.5Z" fill="#f2c6a0"/><circle cx="-1.3" cy="-0.3" r="0.4" fill="#5a2a10"/><circle cx="1.3" cy="-0.3" r="0.4" fill="#5a2a10"/><circle cx="0" cy="1.6" r="0.45" fill="#8a4a5a"/></g>
<rect x="414.20" y="245.10" width="192.80" height="110.60" rx="3.9" fill="#553333" filter="url(#sh)"/>
<path d="M414.20 259.60 L414.20 249.00 Q414.20 245.10 418.10 245.10 L603.10 245.10 Q607.00 245.10 607.00 249.00 L607.00 259.60Z" fill="#332222"/>
<rect x="414.20" y="259.10" width="192.80" height="0.8" fill="rgba(0,0,0,0.18)"/>
<circle cx="421.30" cy="252.35" r="2.35" fill="#707070"/>
<text x="428.00" y="254.80" font-size="6.77" fill="#999" text-anchor="start" font-family='"Liberation Sans", sans-serif' font-weight="normal" >Negative Prompt</text>
<circle cx="418.60" cy="266.17" r="1.8" fill="#ffd500"/>
<text x="423.30" y="268.27" font-size="6.05" fill="#aaa" text-anchor="start" font-family='"Liberation Sans", sans-serif' font-weight="normal" >clip</text>
<circle cx="602.80" cy="266.17" r="1.8" fill="#ffa931"/>
<text x="598.10" y="268.27" font-size="6.05" fill="#aaa" text-anchor="end" font-family='"Liberation Sans", sans-serif' font-weight="normal" >CONDITIONING</text>
<rect x="419.0" y="277.0" width="183.0" height="75.0" fill="#222"/>
<text x="419.70" y="282.90" font-size="4.45" fill="#ddd" text-anchor="start" font-family='"Liberation Mono", monospace' font-weight="normal" >ugly, watermark, low quality, camera angle, shadow, background</text>
<path d="M629.00 172.00 L629.00 163.50 Q629.00 161.50 631.00 161.50 L649.40 161.50 Q651.40 161.50 651.40 163.50 L651.40 172.00Z" fill="#333"/>
<text x="632.30" y="168.20" font-size="5.20" fill="#888" text-anchor="start" font-family='"Liberation Sans", sans-serif' font-weight="normal" >0.003s</text>
<rect x="786.00" y="160.40" width="24.80" height="9.6" rx="2.4" fill="#0f1f0f"/>
<text x="788.80" y="167.40" font-size="6.10" fill="#fff" text-anchor="start" font-family='"Liberation Sans", sans-serif' font-weight="normal" stroke="#fff" stroke-width="0.15">#10</text>
<g transform="translate(804.10,165.50) scale(0.86)"><path d="M-3.1 -3.3 L-0.7 -1.6 L0.7 -1.6 L3.1 -3.3 L3.2 0.2 Q3.1 3.1 0 3.3 Q-3.1 3.1 -3.2 0.2 Z" fill="#f28624"/><path d="M-2.6 -2.5 L-1.3 -1.5 L-2.6 -0.9Z M2.6 -2.5 L1.3 -1.5 L2.6 -0.9Z" fill="#fbb85a"/><path d="M-3.1 0.5 Q-1.6 0.1 0 1.2 Q1.6 0.1 3.1 0.5 Q2.8 3.1 0 3.3 Q-2.8 3.1 -3.1 0.5Z" fill="#f2c6a0"/><circle cx="-1.3" cy="-0.3" r="0.4" fill="#5a2a10"/><circle cx="1.3" cy="-0.3" r="0.4" fill="#5a2a10"/><circle cx="0" cy="1.6" r="0.45" fill="#8a4a5a"/></g>
<rect x="629.00" y="171.50" width="183.00" height="35.80" rx="3.9" fill="#353535" filter="url(#sh)"/>
<path d="M629.00 186.00 L629.00 175.40 Q629.00 171.50 632.90 171.50 L808.10 171.50 Q812.00 171.50 812.00 175.40 L812.00 186.00Z" fill="#333"/>
<rect x="629.00" y="185.50" width="183.00" height="0.8" fill="rgba(0,0,0,0.18)"/>
<circle cx="636.10" cy="178.75" r="2.35" fill="#707070"/>
<text x="642.80" y="181.20" font-size="6.77" fill="#999" text-anchor="start" font-family='"Liberation Sans", sans-serif' font-weight="normal" >Conditioning (Concat)</text>
<circle cx="633.40" cy="192.57" r="1.8" fill="#ffa931"/>
<text x="638.10" y="194.67" font-size="6.05" fill="#aaa" text-anchor="start" font-family='"Liberation Sans", sans-serif' font-weight="normal" >conditioning_to</text>
<circle cx="633.40" cy="202.23" r="1.8" fill="#ffa931"/>
<text x="638.10" y="204.33" font-size="6.05" fill="#aaa" text-anchor="start" font-family='"Liberation Sans", sans-serif' font-weight="normal" >conditioning_from</text>
<circle cx="807.80" cy="192.57" r="1.8" fill="#ffa931"/>
<text x="803.10" y="194.67" font-size="6.05" fill="#aaa" text-anchor="end" font-family='"Liberation Sans", sans-serif' font-weight="normal" >CONDITIONING</text>
<path d="M633.70 230.25 L633.70 221.75 Q633.70 219.75 635.70 219.75 L654.10 219.75 Q656.10 219.75 656.10 221.75 L656.10 230.25Z" fill="#333"/>
<text x="637.00" y="226.45" font-size="5.20" fill="#888" text-anchor="start" font-family='"Liberation Sans", sans-serif' font-weight="normal" >0.008s</text>
<rect x="791.00" y="218.65" width="24.80" height="9.6" rx="2.4" fill="#0f1f0f"/>
<text x="793.80" y="225.65" font-size="6.10" fill="#fff" text-anchor="start" font-family='"Liberation Sans", sans-serif' font-weight="normal" stroke="#fff" stroke-width="0.15">#15</text>
<g transform="translate(809.10,223.75) scale(0.86)"><path d="M-3.1 -3.3 L-0.7 -1.6 L0.7 -1.6 L3.1 -3.3 L3.2 0.2 Q3.1 3.1 0 3.3 Q-3.1 3.1 -3.2 0.2 Z" fill="#f28624"/><path d="M-2.6 -2.5 L-1.3 -1.5 L-2.6 -0.9Z M2.6 -2.5 L1.3 -1.5 L2.6 -0.9Z" fill="#fbb85a"/><path d="M-3.1 0.5 Q-1.6 0.1 0 1.2 Q1.6 0.1 3.1 0.5 Q2.8 3.1 0 3.3 Q-2.8 3.1 -3.1 0.5Z" fill="#f2c6a0"/><circle cx="-1.3" cy="-0.3" r="0.4" fill="#5a2a10"/><circle cx="1.3" cy="-0.3" r="0.4" fill="#5a2a10"/><circle cx="0" cy="1.6" r="0.45" fill="#8a4a5a"/></g>
<rect x="633.70" y="229.75" width="183.30" height="35.85" rx="3.9" fill="#353535" filter="url(#sh)"/>
<path d="M633.70 244.25 L633.70 233.65 Q633.70 229.75 637.60 229.75 L813.10 229.75 Q817.00 229.75 817.00 233.65 L817.00 244.25Z" fill="#333"/>
<rect x="633.70" y="243.75" width="183.30" height="0.8" fill="rgba(0,0,0,0.18)"/>
<circle cx="640.80" cy="237.00" r="2.35" fill="#707070"/>
<text x="647.50" y="239.45" font-size="6.77" fill="#999" text-anchor="start" font-family='"Liberation Sans", sans-serif' font-weight="normal" >Conditioning (Concat)</text>
<circle cx="638.10" cy="250.82" r="1.8" fill="#ffa931"/>
<text x="642.80" y="252.92" font-size="6.05" fill="#aaa" text-anchor="start" font-family='"Liberation Sans", sans-serif' font-weight="normal" >conditioning_to</text>
<circle cx="638.10" cy="260.48" r="1.8" fill="#ffa931"/>
<text x="642.80" y="262.58" font-size="6.05" fill="#aaa" text-anchor="start" font-family='"Liberation Sans", sans-serif' font-weight="normal" >conditioning_from</text>
<circle cx="812.80" cy="250.82" r="1.8" fill="#ffa931"/>
<text x="808.10" y="252.92" font-size="6.05" fill="#aaa" text-anchor="end" font-family='"Liberation Sans", sans-serif' font-weight="normal" >CONDITIONING</text>
<path d="M870.30 146.90 L870.30 138.40 Q870.30 136.40 872.30 136.40 L890.70 136.40 Q892.70 136.40 892.70 138.40 L892.70 146.90Z" fill="#333"/>
<text x="873.60" y="143.10" font-size="5.20" fill="#888" text-anchor="start" font-family='"Liberation Sans", sans-serif' font-weight="normal" >7.049s</text>
<rect x="998.75" y="135.30" width="21.65" height="9.6" rx="2.4" fill="#0f1f0f"/>
<text x="1001.55" y="142.30" font-size="6.10" fill="#fff" text-anchor="start" font-family='"Liberation Sans", sans-serif' font-weight="normal" stroke="#fff" stroke-width="0.15">#2</text>
<g transform="translate(1013.70,140.40) scale(0.86)"><path d="M-3.1 -3.3 L-0.7 -1.6 L0.7 -1.6 L3.1 -3.3 L3.2 0.2 Q3.1 3.1 0 3.3 Q-3.1 3.1 -3.2 0.2 Z" fill="#f28624"/><path d="M-2.6 -2.5 L-1.3 -1.5 L-2.6 -0.9Z M2.6 -2.5 L1.3 -1.5 L2.6 -0.9Z" fill="#fbb85a"/><path d="M-3.1 0.5 Q-1.6 0.1 0 1.2 Q1.6 0.1 3.1 0.5 Q2.8 3.1 0 3.3 Q-2.8 3.1 -3.1 0.5Z" fill="#f2c6a0"/><circle cx="-1.3" cy="-0.3" r="0.4" fill="#5a2a10"/><circle cx="1.3" cy="-0.3" r="0.4" fill="#5a2a10"/><circle cx="0" cy="1.6" r="0.45" fill="#8a4a5a"/></g>
<rect x="870.30" y="146.40" width="151.30" height="140.50" rx="3.9" fill="#353535" filter="url(#sh)"/>
<path d="M870.30 160.90 L870.30 150.30 Q870.30 146.40 874.20 146.40 L1017.70 146.40 Q1021.60 146.40 1021.60 150.30 L1021.60 160.90Z" fill="#333"/>
<rect x="870.30" y="160.40" width="151.30" height="0.8" fill="rgba(0,0,0,0.18)"/>
<circle cx="877.40" cy="153.65" r="2.35" fill="#707070"/>
<text x="884.10" y="156.10" font-size="6.77" fill="#999" text-anchor="start" font-family='"Liberation Sans", sans-serif' font-weight="normal" >KSampler</text>
<circle cx="874.70" cy="167.47" r="1.8" fill="#b39ddb"/>
<text x="879.40" y="169.57" font-size="6.05" fill="#aaa" text-anchor="start" font-family='"Liberation Sans", sans-serif' font-weight="normal" >model</text>
<circle cx="874.70" cy="177.13" r="1.8" fill="#ffa931"/>
<text x="879.40" y="179.23" font-size="6.05" fill="#aaa" text-anchor="start" font-family='"Liberation Sans", sans-serif' font-weight="normal" >positive</text>
<circle cx="874.70" cy="186.80" r="1.8" fill="#ffa931"/>
<text x="879.40" y="188.90" font-size="6.05" fill="#aaa" text-anchor="start" font-family='"Liberation Sans", sans-serif' font-weight="normal" >negative</text>
<circle cx="874.70" cy="196.46" r="1.8" fill="#ff9cf9"/>
<text x="879.40" y="198.56" font-size="6.05" fill="#aaa" text-anchor="start" font-family='"Liberation Sans", sans-serif' font-weight="normal" >latent_image</text>
<circle cx="1017.40" cy="167.47" r="1.8" fill="#ff9cf9"/>
<text x="1012.70" y="169.57" font-size="6.05" fill="#aaa" text-anchor="end" font-family='"Liberation Sans", sans-serif' font-weight="normal" >LATENT</text>
<rect x="876.70" y="201.77" width="137.20" height="9.67" rx="4.83" fill="#222" stroke="#666" stroke-width="0.5"/>
<path d="M884.50 204.18 L879.70 206.60 L884.50 209.02Z" fill="#ddd"/>
<path d="M1006.10 204.18 L1010.90 206.60 L1006.10 209.02Z" fill="#ddd"/>
<text x="886.30" y="208.53" font-size="6.00" fill="#999" text-anchor="start" font-family='"Liberation Sans", sans-serif' font-weight="normal" >seed</text>
<text x="997.00" y="208.53" font-size="6.00" fill="#ddd" text-anchor="end" font-family='"Liberation Sans", sans-serif' font-weight="normal" >407360448386384</text>
<rect x="876.70" y="213.37" width="137.20" height="9.67" rx="4.83" fill="#222" stroke="#666" stroke-width="0.5"/>
<path d="M884.50 215.78 L879.70 218.20 L884.50 220.62Z" fill="#ddd"/>
<path d="M1006.10 215.78 L1010.90 218.20 L1006.10 220.62Z" fill="#ddd"/>
<text x="886.30" y="220.13" font-size="6.00" fill="#999" text-anchor="start" font-family='"Liberation Sans", sans-serif' font-weight="normal" >control_after_generate</text>
<text x="997.00" y="220.13" font-size="6.00" fill="#ddd" text-anchor="end" font-family='"Liberation Sans", sans-serif' font-weight="normal" >randomize</text>
<rect x="876.70" y="224.97" width="137.20" height="9.67" rx="4.83" fill="#222" stroke="#666" stroke-width="0.5"/>
<path d="M884.50 227.38 L879.70 229.80 L884.50 232.21Z" fill="#ddd"/>
<path d="M1006.10 227.38 L1010.90 229.80 L1006.10 232.21Z" fill="#ddd"/>
<text x="886.30" y="231.73" font-size="6.00" fill="#999" text-anchor="start" font-family='"Liberation Sans", sans-serif' font-weight="normal" >steps</text>
<text x="997.00" y="231.73" font-size="6.00" fill="#ddd" text-anchor="end" font-family='"Liberation Sans", sans-serif' font-weight="normal" >38</text>
<rect x="876.70" y="236.56" width="137.20" height="9.67" rx="4.83" fill="#222" stroke="#666" stroke-width="0.5"/>
<path d="M884.50 238.98 L879.70 241.40 L884.50 243.81Z" fill="#ddd"/>
<path d="M1006.10 238.98 L1010.90 241.40 L1006.10 243.81Z" fill="#ddd"/>
<text x="886.30" y="243.33" font-size="6.00" fill="#999" text-anchor="start" font-family='"Liberation Sans", sans-serif' font-weight="normal" >cfg</text>
<text x="997.00" y="243.33" font-size="6.00" fill="#ddd" text-anchor="end" font-family='"Liberation Sans", sans-serif' font-weight="normal" >7.0</text>
<rect x="876.70" y="248.16" width="137.20" height="9.67" rx="4.83" fill="#222" stroke="#666" stroke-width="0.5"/>
<path d="M884.50 250.58 L879.70 253.00 L884.50 255.41Z" fill="#ddd"/>
<path d="M1006.10 250.58 L1010.90 253.00 L1006.10 255.41Z" fill="#ddd"/>
<text x="886.30" y="254.93" font-size="6.00" fill="#999" text-anchor="start" font-family='"Liberation Sans", sans-serif' font-weight="normal" >sampler_name</text>
<text x="997.00" y="254.93" font-size="6.00" fill="#ddd" text-anchor="end" font-family='"Liberation Sans", sans-serif' font-weight="normal" >dpmpp_2m</text>
<rect x="876.70" y="259.76" width="137.20" height="9.67" rx="4.83" fill="#222" stroke="#666" stroke-width="0.5"/>
<path d="M884.50 262.18 L879.70 264.60 L884.50 267.01Z" fill="#ddd"/>
<path d="M1006.10 262.18 L1010.90 264.60 L1006.10 267.01Z" fill="#ddd"/>
<text x="886.30" y="266.53" font-size="6.00" fill="#999" text-anchor="start" font-family='"Liberation Sans", sans-serif' font-weight="normal" >scheduler</text>
<text x="997.00" y="266.53" font-size="6.00" fill="#ddd" text-anchor="end" font-family='"Liberation Sans", sans-serif' font-weight="normal" >sgm_uniform</text>
<rect x="876.70" y="271.36" width="137.20" height="9.67" rx="4.83" fill="#222" stroke="#666" stroke-width="0.5"/>
<path d="M884.50 273.78 L879.70 276.20 L884.50 278.61Z" fill="#ddd"/>
<path d="M1006.10 273.78 L1010.90 276.20 L1006.10 278.61Z" fill="#ddd"/>
<text x="886.30" y="278.13" font-size="6.00" fill="#999" text-anchor="start" font-family='"Liberation Sans", sans-serif' font-weight="normal" >denoise</text>
<text x="997.00" y="278.13" font-size="6.00" fill="#ddd" text-anchor="end" font-family='"Liberation Sans", sans-serif' font-weight="normal" >1.00</text>
<path d="M871.30 300.70 L871.30 292.20 Q871.30 290.20 873.30 290.20 L891.70 290.20 Q893.70 290.20 893.70 292.20 L893.70 300.70Z" fill="#333"/>
<text x="874.60" y="296.90" font-size="5.20" fill="#888" text-anchor="start" font-family='"Liberation Sans", sans-serif' font-weight="normal" >0.004s</text>
<rect x="996.90" y="289.10" width="25.00" height="9.6" rx="2.4" fill="#0f1f0f"/>
<text x="999.70" y="296.10" font-size="6.10" fill="#fff" text-anchor="start" font-family='"Liberation Sans", sans-serif' font-weight="normal" stroke="#fff" stroke-width="0.15">#13</text>
<g transform="translate(1015.20,294.20) scale(0.86)"><path d="M-3.1 -3.3 L-0.7 -1.6 L0.7 -1.6 L3.1 -3.3 L3.2 0.2 Q3.1 3.1 0 3.3 Q-3.1 3.1 -3.2 0.2 Z" fill="#f28624"/><path d="M-2.6 -2.5 L-1.3 -1.5 L-2.6 -0.9Z M2.6 -2.5 L1.3 -1.5 L2.6 -0.9Z" fill="#fbb85a"/><path d="M-3.1 0.5 Q-1.6 0.1 0 1.2 Q1.6 0.1 3.1 0.5 Q2.8 3.1 0 3.3 Q-2.8 3.1 -3.1 0.5Z" fill="#f2c6a0"/><circle cx="-1.3" cy="-0.3" r="0.4" fill="#5a2a10"/><circle cx="1.3" cy="-0.3" r="0.4" fill="#5a2a10"/><circle cx="0" cy="1.6" r="0.45" fill="#8a4a5a"/></g>
<rect x="871.30" y="300.20" width="151.80" height="64.60" rx="3.9" fill="#353535" filter="url(#sh)"/>
<path d="M871.30 314.70 L871.30 304.10 Q871.30 300.20 875.20 300.20 L1019.20 300.20 Q1023.10 300.20 1023.10 304.10 L1023.10 314.70Z" fill="#333"/>
<rect x="871.30" y="314.20" width="151.80" height="0.8" fill="rgba(0,0,0,0.18)"/>
<circle cx="878.40" cy="307.45" r="2.35" fill="#707070"/>
<text x="885.10" y="309.90" font-size="6.77" fill="#999" text-anchor="start" font-family='"Liberation Sans", sans-serif' font-weight="normal" >EmptySD3LatentImage</text>
<circle cx="1018.90" cy="321.27" r="1.8" fill="#ff9cf9"/>
<text x="1014.20" y="323.37" font-size="6.05" fill="#aaa" text-anchor="end" font-family='"Liberation Sans", sans-serif' font-weight="normal" >LATENT</text>
<rect x="877.70" y="326.27" width="137.70" height="9.67" rx="4.83" fill="#222" stroke="#666" stroke-width="0.5"/>
<path d="M885.50 328.68 L880.70 331.10 L885.50 333.52Z" fill="#ddd"/>
<path d="M1007.60 328.68 L1012.40 331.10 L1007.60 333.52Z" fill="#ddd"/>
<text x="887.30" y="333.03" font-size="6.00" fill="#999" text-anchor="start" font-family='"Liberation Sans", sans-serif' font-weight="normal" >width</text>
<text x="998.50" y="333.03" font-size="6.00" fill="#ddd" text-anchor="end" font-family='"Liberation Sans", sans-serif' font-weight="normal" >1024</text>
<rect x="877.70" y="337.87" width="137.70" height="9.67" rx="4.83" fill="#222" stroke="#666" stroke-width="0.5"/>
<path d="M885.50 340.28 L880.70 342.70 L885.50 345.12Z" fill="#ddd"/>
<path d="M1007.60 340.28 L1012.40 342.70 L1007.60 345.12Z" fill="#ddd"/>
<text x="887.30" y="344.63" font-size="6.00" fill="#999" text-anchor="start" font-family='"Liberation Sans", sans-serif' font-weight="normal" >height</text>
<text x="998.50" y="344.63" font-size="6.00" fill="#ddd" text-anchor="end" font-family='"Liberation Sans", sans-serif' font-weight="normal" >1024</text>
<rect x="877.70" y="349.47" width="137.70" height="9.67" rx="4.83" fill="#222" stroke="#666" stroke-width="0.5"/>
<path d="M885.50 351.88 L880.70 354.30 L885.50 356.71Z" fill="#ddd"/>
<path d="M1007.60 351.88 L1012.40 354.30 L1007.60 356.71Z" fill="#ddd"/>
<text x="887.30" y="356.23" font-size="6.00" fill="#999" text-anchor="start" font-family='"Liberation Sans", sans-serif' font-weight="normal" >batch_size</text>
<text x="998.50" y="356.23" font-size="6.00" fill="#ddd" text-anchor="end" font-family='"Liberation Sans", sans-serif' font-weight="normal" >1</text>
<path d="M874.00 382.00 L874.00 373.50 Q874.00 371.50 876.00 371.50 L894.40 371.50 Q896.40 371.50 896.40 373.50 L896.40 382.00Z" fill="#333"/>
<text x="877.30" y="378.20" font-size="5.20" fill="#888" text-anchor="start" font-family='"Liberation Sans", sans-serif' font-weight="normal" >0.406s</text>
<rect x="999.00" y="370.40" width="22.40" height="9.6" rx="2.4" fill="#0f1f0f"/>
<text x="1001.80" y="377.40" font-size="6.10" fill="#fff" text-anchor="start" font-family='"Liberation Sans", sans-serif' font-weight="normal" stroke="#fff" stroke-width="0.15">#7</text>
<g transform="translate(1014.70,375.50) scale(0.86)"><path d="M-3.1 -3.3 L-0.7 -1.6 L0.7 -1.6 L3.1 -3.3 L3.2 0.2 Q3.1 3.1 0 3.3 Q-3.1 3.1 -3.2 0.2 Z" fill="#f28624"/><path d="M-2.6 -2.5 L-1.3 -1.5 L-2.6 -0.9Z M2.6 -2.5 L1.3 -1.5 L2.6 -0.9Z" fill="#fbb85a"/><path d="M-3.1 0.5 Q-1.6 0.1 0 1.2 Q1.6 0.1 3.1 0.5 Q2.8 3.1 0 3.3 Q-2.8 3.1 -3.1 0.5Z" fill="#f2c6a0"/><circle cx="-1.3" cy="-0.3" r="0.4" fill="#5a2a10"/><circle cx="1.3" cy="-0.3" r="0.4" fill="#5a2a10"/><circle cx="0" cy="1.6" r="0.45" fill="#8a4a5a"/></g>
<rect x="874.00" y="381.50" width="148.60" height="39.80" rx="3.9" fill="#353535" filter="url(#sh)"/>
<path d="M874.00 396.00 L874.00 385.40 Q874.00 381.50 877.90 381.50 L1018.70 381.50 Q1022.60 381.50 1022.60 385.40 L1022.60 396.00Z" fill="#333"/>
<rect x="874.00" y="395.50" width="148.60" height="0.8" fill="rgba(0,0,0,0.18)"/>
<circle cx="881.10" cy="388.75" r="2.35" fill="#707070"/>
<text x="887.80" y="391.20" font-size="6.77" fill="#999" text-anchor="start" font-family='"Liberation Sans", sans-serif' font-weight="normal" >VAE Decode</text>
<circle cx="878.40" cy="402.57" r="1.8" fill="#ff9cf9"/>
<text x="883.10" y="404.67" font-size="6.05" fill="#aaa" text-anchor="start" font-family='"Liberation Sans", sans-serif' font-weight="normal" >samples</text>
<circle cx="878.40" cy="412.23" r="1.8" fill="#ff6e6e"/>
<text x="883.10" y="414.33" font-size="6.05" fill="#aaa" text-anchor="start" font-family='"Liberation Sans", sans-serif' font-weight="normal" >vae</text>
<circle cx="1018.40" cy="402.57" r="1.8" fill="#64b5f6"/>
<text x="1013.70" y="404.67" font-size="6.05" fill="#aaa" text-anchor="end" font-family='"Liberation Sans", sans-serif' font-weight="normal" >IMAGE</text>
<path d="M1055.20 110.80 L1055.20 102.30 Q1055.20 100.30 1057.20 100.30 L1075.60 100.30 Q1077.60 100.30 1077.60 102.30 L1077.60 110.80Z" fill="#333"/>
<text x="1058.50" y="107.00" font-size="5.20" fill="#888" text-anchor="start" font-family='"Liberation Sans", sans-serif' font-weight="normal" >0.110s</text>
<rect x="1292.00" y="99.20" width="21.50" height="9.6" rx="2.4" fill="#0f1f0f"/>
<text x="1294.80" y="106.20" font-size="6.10" fill="#fff" text-anchor="start" font-family='"Liberation Sans", sans-serif' font-weight="normal" stroke="#fff" stroke-width="0.15">#8</text>
<g transform="translate(1306.80,104.30) scale(0.86)"><path d="M-3.1 -3.3 L-0.7 -1.6 L0.7 -1.6 L3.1 -3.3 L3.2 0.2 Q3.1 3.1 0 3.3 Q-3.1 3.1 -3.2 0.2 Z" fill="#f28624"/><path d="M-2.6 -2.5 L-1.3 -1.5 L-2.6 -0.9Z M2.6 -2.5 L1.3 -1.5 L2.6 -0.9Z" fill="#fbb85a"/><path d="M-3.1 0.5 Q-1.6 0.1 0 1.2 Q1.6 0.1 3.1 0.5 Q2.8 3.1 0 3.3 Q-2.8 3.1 -3.1 0.5Z" fill="#f2c6a0"/><circle cx="-1.3" cy="-0.3" r="0.4" fill="#5a2a10"/><circle cx="1.3" cy="-0.3" r="0.4" fill="#5a2a10"/><circle cx="0" cy="1.6" r="0.45" fill="#8a4a5a"/></g>
<rect x="1055.20" y="110.30" width="259.50" height="298.40" rx="3.9" fill="#353535" filter="url(#sh)"/>
<path d="M1055.20 124.80 L1055.20 114.20 Q1055.20 110.30 1059.10 110.30 L1310.80 110.30 Q1314.70 110.30 1314.70 114.20 L1314.70 124.80Z" fill="#333"/>
<rect x="1055.20" y="124.30" width="259.50" height="0.8" fill="rgba(0,0,0,0.18)"/>
<circle cx="1062.30" cy="117.55" r="2.35" fill="#707070"/>
<text x="1069.00" y="120.00" font-size="6.77" fill="#999" text-anchor="start" font-family='"Liberation Sans", sans-serif' font-weight="normal" >Save Image</text>
<circle cx="1059.60" cy="131.37" r="1.8" fill="#64b5f6"/>
<text x="1064.30" y="133.47" font-size="6.05" fill="#aaa" text-anchor="start" font-family='"Liberation Sans", sans-serif' font-weight="normal" >images</text>
<rect x="1061.60" y="137.27" width="245.40" height="9.67" rx="4.83" fill="#222" stroke="#666" stroke-width="0.5"/>
<text x="1069.50" y="144.03" font-size="6.00" fill="#999" text-anchor="start" font-family='"Liberation Sans", sans-serif' font-weight="normal" >filename_prefix</text>
<text x="1300.10" y="144.03" font-size="6.00" fill="#ddd" text-anchor="end" font-family='"Liberation Sans", sans-serif' font-weight="normal" >ComfyUI</text>
<rect x="1055.2" y="149.0" width="259.5" height="259.7" fill="#fdfdfd"/>
<path d="M887.20 505.50 L887.20 497.00 Q887.20 495.00 889.20 495.00 L907.60 495.00 Q909.60 495.00 909.60 497.00 L909.60 505.50Z" fill="#333"/>
<text x="890.50" y="501.70" font-size="5.20" fill="#888" text-anchor="start" font-family='"Liberation Sans", sans-serif' font-weight="normal" >1.701s</text>
<rect x="951.90" y="493.90" width="86.40" height="9.6" rx="2.4" fill="#0f1f0f"/>
<text x="954.70" y="500.90" font-size="6.10" fill="#fff" text-anchor="start" font-family='"Liberation Sans", sans-serif' font-weight="normal" stroke="#fff" stroke-width="0.15">#19 comfyui-inspyrenet-rembg</text>
<rect x="887.20" y="505.00" width="152.30" height="51.90" rx="3.9" fill="#353535" filter="url(#sh)"/>
<path d="M887.20 519.50 L887.20 508.90 Q887.20 505.00 891.10 505.00 L1035.60 505.00 Q1039.50 505.00 1039.50 508.90 L1039.50 519.50Z" fill="#333"/>
<rect x="887.20" y="519.00" width="152.30" height="0.8" fill="rgba(0,0,0,0.18)"/>
<circle cx="894.30" cy="512.25" r="2.35" fill="#707070"/>
<text x="901.00" y="514.70" font-size="6.77" fill="#999" text-anchor="start" font-family='"Liberation Sans", sans-serif' font-weight="normal" >Inspyrenet Rembg</text>
<circle cx="891.60" cy="526.07" r="1.8" fill="#64b5f6"/>
<text x="896.30" y="528.17" font-size="6.05" fill="#aaa" text-anchor="start" font-family='"Liberation Sans", sans-serif' font-weight="normal" >image</text>
<circle cx="1035.30" cy="526.07" r="1.8" fill="#64b5f6"/>
<text x="1030.60" y="528.17" font-size="6.05" fill="#aaa" text-anchor="end" font-family='"Liberation Sans", sans-serif' font-weight="normal" >IMAGE</text>
<circle cx="1035.30" cy="535.73" r="1.8" fill="#81c784"/>
<text x="1030.60" y="537.83" font-size="6.05" fill="#aaa" text-anchor="end" font-family='"Liberation Sans", sans-serif' font-weight="normal" >MASK</text>
<rect x="893.60" y="540.77" width="138.20" height="9.67" rx="4.83" fill="#222" stroke="#666" stroke-width="0.5"/>
<path d="M901.40 543.18 L896.60 545.60 L901.40 548.02Z" fill="#ddd"/>
<path d="M1024.00 543.18 L1028.80 545.60 L1024.00 548.02Z" fill="#ddd"/>
<text x="903.20" y="547.53" font-size="6.00" fill="#999" text-anchor="start" font-family='"Liberation Sans", sans-serif' font-weight="normal" >torchscript_jit</text>
<text x="1014.90" y="547.53" font-size="6.00" fill="#ddd" text-anchor="end" font-family='"Liberation Sans", sans-serif' font-weight="normal" >default</text>
<path d="M887.50 572.70 L887.50 564.20 Q887.50 562.20 889.50 562.20 L907.90 562.20 Q909.90 562.20 909.90 564.20 L909.90 572.70Z" fill="#333"/>
<text x="890.80" y="568.90" font-size="5.20" fill="#888" text-anchor="start" font-family='"Liberation Sans", sans-serif' font-weight="normal" >0.226s</text>
<rect x="1015.30" y="561.10" width="35.30" height="9.6" rx="2.4" fill="#0f1f0f"/>
<text x="1018.10" y="568.10" font-size="6.10" fill="#fff" text-anchor="start" font-family='"Liberation Sans", sans-serif' font-weight="normal" stroke="#fff" stroke-width="0.15">#20 ToSVG</text>
<rect x="887.50" y="572.20" width="164.30" height="146.20" rx="3.9" fill="#353535" filter="url(#sh)"/>
<path d="M887.50 586.70 L887.50 576.10 Q887.50 572.20 891.40 572.20 L1047.90 572.20 Q1051.80 572.20 1051.80 576.10 L1051.80 586.70Z" fill="#333"/>
<rect x="887.50" y="586.20" width="164.30" height="0.8" fill="rgba(0,0,0,0.18)"/>
<circle cx="894.60" cy="579.45" r="2.35" fill="#707070"/>
<text x="901.30" y="581.90" font-size="6.77" fill="#999" text-anchor="start" font-family='"Liberation Sans", sans-serif' font-weight="normal" >Raster to Vector (SVG)Color</text>
<circle cx="891.90" cy="593.27" r="1.8" fill="#64b5f6"/>
<text x="896.60" y="595.37" font-size="6.05" fill="#aaa" text-anchor="start" font-family='"Liberation Sans", sans-serif' font-weight="normal" >image</text>
<circle cx="1047.60" cy="593.27" r="1.8" fill="#7f7"/>
<text x="1042.90" y="595.37" font-size="6.05" fill="#aaa" text-anchor="end" font-family='"Liberation Sans", sans-serif' font-weight="normal" >LIST</text>
<rect x="893.90" y="599.07" width="150.20" height="9.67" rx="4.83" fill="#222" stroke="#666" stroke-width="0.5"/>
<path d="M901.70 601.48 L896.90 603.90 L901.70 606.32Z" fill="#ddd"/>
<path d="M1036.30 601.48 L1041.10 603.90 L1036.30 606.32Z" fill="#ddd"/>
<text x="903.50" y="605.83" font-size="6.00" fill="#999" text-anchor="start" font-family='"Liberation Sans", sans-serif' font-weight="normal" >hierarchical</text>
<text x="1027.20" y="605.83" font-size="6.00" fill="#ddd" text-anchor="end" font-family='"Liberation Sans", sans-serif' font-weight="normal" >stacked</text>
<rect x="893.90" y="610.67" width="150.20" height="9.67" rx="4.83" fill="#222" stroke="#666" stroke-width="0.5"/>
<path d="M901.70 613.08 L896.90 615.50 L901.70 617.92Z" fill="#ddd"/>
<path d="M1036.30 613.08 L1041.10 615.50 L1036.30 617.92Z" fill="#ddd"/>
<text x="903.50" y="617.43" font-size="6.00" fill="#999" text-anchor="start" font-family='"Liberation Sans", sans-serif' font-weight="normal" >mode</text>
<text x="1027.20" y="617.43" font-size="6.00" fill="#ddd" text-anchor="end" font-family='"Liberation Sans", sans-serif' font-weight="normal" >spline</text>
<rect x="893.90" y="622.27" width="150.20" height="9.67" rx="4.83" fill="#222" stroke="#666" stroke-width="0.5"/>
<path d="M901.70 624.68 L896.90 627.10 L901.70 629.51Z" fill="#ddd"/>
<path d="M1036.30 624.68 L1041.10 627.10 L1036.30 629.51Z" fill="#ddd"/>
<text x="903.50" y="629.03" font-size="6.00" fill="#999" text-anchor="start" font-family='"Liberation Sans", sans-serif' font-weight="normal" >filter_speckle</text>
<text x="1027.20" y="629.03" font-size="6.00" fill="#ddd" text-anchor="end" font-family='"Liberation Sans", sans-serif' font-weight="normal" >4</text>
<rect x="893.90" y="633.86" width="150.20" height="9.67" rx="4.83" fill="#222" stroke="#666" stroke-width="0.5"/>
<path d="M901.70 636.28 L896.90 638.70 L901.70 641.11Z" fill="#ddd"/>
<path d="M1036.30 636.28 L1041.10 638.70 L1036.30 641.11Z" fill="#ddd"/>
<text x="903.50" y="640.63" font-size="6.00" fill="#999" text-anchor="start" font-family='"Liberation Sans", sans-serif' font-weight="normal" >color_precision</text>
<text x="1027.20" y="640.63" font-size="6.00" fill="#ddd" text-anchor="end" font-family='"Liberation Sans", sans-serif' font-weight="normal" >6</text>
<rect x="893.90" y="645.46" width="150.20" height="9.67" rx="4.83" fill="#222" stroke="#666" stroke-width="0.5"/>
<path d="M901.70 647.88 L896.90 650.30 L901.70 652.71Z" fill="#ddd"/>
<path d="M1036.30 647.88 L1041.10 650.30 L1036.30 652.71Z" fill="#ddd"/>
<text x="903.50" y="652.23" font-size="6.00" fill="#999" text-anchor="start" font-family='"Liberation Sans", sans-serif' font-weight="normal" >layer_difference</text>
<text x="1027.20" y="652.23" font-size="6.00" fill="#ddd" text-anchor="end" font-family='"Liberation Sans", sans-serif' font-weight="normal" >16</text>
<rect x="893.90" y="657.06" width="150.20" height="9.67" rx="4.83" fill="#222" stroke="#666" stroke-width="0.5"/>
<path d="M901.70 659.48 L896.90 661.90 L901.70 664.31Z" fill="#ddd"/>
<path d="M1036.30 659.48 L1041.10 661.90 L1036.30 664.31Z" fill="#ddd"/>
<text x="903.50" y="663.83" font-size="6.00" fill="#999" text-anchor="start" font-family='"Liberation Sans", sans-serif' font-weight="normal" >corner_threshold</text>
<text x="1027.20" y="663.83" font-size="6.00" fill="#ddd" text-anchor="end" font-family='"Liberation Sans", sans-serif' font-weight="normal" >60</text>
<rect x="893.90" y="668.66" width="150.20" height="9.67" rx="4.83" fill="#222" stroke="#666" stroke-width="0.5"/>
<path d="M901.70 671.08 L896.90 673.50 L901.70 675.91Z" fill="#ddd"/>
<path d="M1036.30 671.08 L1041.10 673.50 L1036.30 675.91Z" fill="#ddd"/>
<text x="903.50" y="675.43" font-size="6.00" fill="#999" text-anchor="start" font-family='"Liberation Sans", sans-serif' font-weight="normal" >length_threshold</text>
<text x="1027.20" y="675.43" font-size="6.00" fill="#ddd" text-anchor="end" font-family='"Liberation Sans", sans-serif' font-weight="normal" >4.0</text>
<rect x="893.90" y="680.26" width="150.20" height="9.67" rx="4.83" fill="#222" stroke="#666" stroke-width="0.5"/>
<path d="M901.70 682.68 L896.90 685.09 L901.70 687.51Z" fill="#ddd"/>
<path d="M1036.30 682.68 L1041.10 685.09 L1036.30 687.51Z" fill="#ddd"/>
<text x="903.50" y="687.03" font-size="6.00" fill="#999" text-anchor="start" font-family='"Liberation Sans", sans-serif' font-weight="normal" >max_iterations</text>
<text x="1027.20" y="687.03" font-size="6.00" fill="#ddd" text-anchor="end" font-family='"Liberation Sans", sans-serif' font-weight="normal" >10</text>
<rect x="893.90" y="691.86" width="150.20" height="9.67" rx="4.83" fill="#222" stroke="#666" stroke-width="0.5"/>
<path d="M901.70 694.28 L896.90 696.69 L901.70 699.11Z" fill="#ddd"/>
<path d="M1036.30 694.28 L1041.10 696.69 L1036.30 699.11Z" fill="#ddd"/>
<text x="903.50" y="698.63" font-size="6.00" fill="#999" text-anchor="start" font-family='"Liberation Sans", sans-serif' font-weight="normal" >splice_threshold</text>
<text x="1027.20" y="698.63" font-size="6.00" fill="#ddd" text-anchor="end" font-family='"Liberation Sans", sans-serif' font-weight="normal" >45</text>
<rect x="893.90" y="703.46" width="150.20" height="9.67" rx="4.83" fill="#222" stroke="#666" stroke-width="0.5"/>
<path d="M901.70 705.88 L896.90 708.29 L901.70 710.71Z" fill="#ddd"/>
<path d="M1036.30 705.88 L1041.10 708.29 L1036.30 710.71Z" fill="#ddd"/>
<text x="903.50" y="710.23" font-size="6.00" fill="#999" text-anchor="start" font-family='"Liberation Sans", sans-serif' font-weight="normal" >path_precision</text>
<text x="1027.20" y="710.23" font-size="6.00" fill="#ddd" text-anchor="end" font-family='"Liberation Sans", sans-serif' font-weight="normal" >3</text>
<path d="M1061.40 597.20 L1061.40 588.70 Q1061.40 586.70 1063.40 586.70 L1081.80 586.70 Q1083.80 586.70 1083.80 588.70 L1083.80 597.20Z" fill="#333"/>
<text x="1064.70" y="593.40" font-size="5.20" fill="#888" text-anchor="start" font-family='"Liberation Sans", sans-serif' font-weight="normal" >0.013s</text>
<rect x="1158.60" y="585.60" width="34.70" height="9.6" rx="2.4" fill="#0f1f0f"/>
<text x="1161.40" y="592.60" font-size="6.10" fill="#fff" text-anchor="start" font-family='"Liberation Sans", sans-serif' font-weight="normal" stroke="#fff" stroke-width="0.15">#16 ToSVG</text>
<rect x="1061.40" y="596.70" width="133.10" height="26.40" rx="3.9" fill="#353535" filter="url(#sh)"/>
<path d="M1061.40 611.20 L1061.40 600.60 Q1061.40 596.70 1065.30 596.70 L1190.60 596.70 Q1194.50 596.70 1194.50 600.60 L1194.50 611.20Z" fill="#333"/>
<rect x="1061.40" y="610.70" width="133.10" height="0.8" fill="rgba(0,0,0,0.18)"/>
<circle cx="1068.50" cy="603.95" r="2.35" fill="#707070"/>
<text x="1075.20" y="606.40" font-size="6.77" fill="#999" text-anchor="start" font-family='"Liberation Sans", sans-serif' font-weight="normal" >Vector to Raster (SVG)</text>
<circle cx="1065.80" cy="617.77" r="1.8" fill="#7f7"/>
<text x="1070.50" y="619.87" font-size="6.05" fill="#aaa" text-anchor="start" font-family='"Liberation Sans", sans-serif' font-weight="normal" >svg_strings</text>
<circle cx="1190.30" cy="617.77" r="1.8" fill="#64b5f6"/>
<text x="1185.60" y="619.87" font-size="6.05" fill="#aaa" text-anchor="end" font-family='"Liberation Sans", sans-serif' font-weight="normal" >IMAGE</text>
<path d="M1061.40 654.70 L1061.40 646.20 Q1061.40 644.20 1063.40 644.20 L1081.80 644.20 Q1083.80 644.20 1083.80 646.20 L1083.80 654.70Z" fill="#333"/>
<text x="1064.70" y="650.90" font-size="5.20" fill="#888" text-anchor="start" font-family='"Liberation Sans", sans-serif' font-weight="normal" >0.053s</text>
<rect x="1177.20" y="643.10" width="34.70" height="9.6" rx="2.4" fill="#0f1f0f"/>
<text x="1180.00" y="650.10" font-size="6.10" fill="#fff" text-anchor="start" font-family='"Liberation Sans", sans-serif' font-weight="normal" stroke="#fff" stroke-width="0.15">#17 ToSVG</text>
<rect x="1061.40" y="654.20" width="151.70" height="64.90" rx="3.9" fill="#353535" filter="url(#sh)"/>
<path d="M1061.40 668.70 L1061.40 658.10 Q1061.40 654.20 1065.30 654.20 L1209.20 654.20 Q1213.10 654.20 1213.10 658.10 L1213.10 668.70Z" fill="#333"/>
<rect x="1061.40" y="668.20" width="151.70" height="0.8" fill="rgba(0,0,0,0.18)"/>
<circle cx="1068.50" cy="661.45" r="2.35" fill="#707070"/>
<text x="1075.20" y="663.90" font-size="6.77" fill="#999" text-anchor="start" font-family='"Liberation Sans", sans-serif' font-weight="normal" >Save SVG</text>
<circle cx="1065.80" cy="675.27" r="1.8" fill="#7f7"/>
<text x="1070.50" y="677.37" font-size="6.05" fill="#aaa" text-anchor="start" font-family='"Liberation Sans", sans-serif' font-weight="normal" >svg_strings</text>
<rect x="1067.80" y="680.77" width="137.60" height="9.67" rx="4.83" fill="#222" stroke="#666" stroke-width="0.5"/>
<text x="1075.70" y="687.53" font-size="6.00" fill="#999" text-anchor="start" font-family='"Liberation Sans", sans-serif' font-weight="normal" >filename_prefix</text>
<text x="1198.50" y="687.53" font-size="6.00" fill="#ddd" text-anchor="end" font-family='"Liberation Sans", sans-serif' font-weight="normal" >ComfyUI_SVG</text>
<rect x="1067.80" y="692.37" width="137.60" height="9.67" rx="4.83" fill="#222" stroke="#666" stroke-width="0.5"/>
<circle cx="1198.10" cy="697.20" r="3.48" fill="#89a"/>
<text x="1075.70" y="699.13" font-size="6.00" fill="#999" text-anchor="start" font-family='"Liberation Sans", sans-serif' font-weight="normal" >append_timestamp</text>
<text x="1193.10" y="699.13" font-size="6.00" fill="#ddd" text-anchor="end" font-family='"Liberation Sans", sans-serif' font-weight="normal" >true</text>
<rect x="1067.80" y="703.97" width="137.60" height="9.67" rx="4.83" fill="#222" stroke="#666" stroke-width="0.5"/>
<text x="1075.70" y="710.73" font-size="6.00" fill="#999" text-anchor="start" font-family='"Liberation Sans", sans-serif' font-weight="normal" >custom_output_path</text>
<path d="M1250.50 550.10 L1250.50 541.60 Q1250.50 539.60 1252.50 539.60 L1270.90 539.60 Q1272.90 539.60 1272.90 541.60 L1272.90 550.10Z" fill="#333"/>
<text x="1253.80" y="546.30" font-size="5.20" fill="#888" text-anchor="start" font-family='"Liberation Sans", sans-serif' font-weight="normal" >0.245s</text>
<rect x="1355.60" y="538.50" width="24.90" height="9.6" rx="2.4" fill="#0f1f0f"/>
<text x="1358.40" y="545.50" font-size="6.10" fill="#fff" text-anchor="start" font-family='"Liberation Sans", sans-serif' font-weight="normal" stroke="#fff" stroke-width="0.15">#18</text>
<g transform="translate(1373.80,543.60) scale(0.86)"><path d="M-3.1 -3.3 L-0.7 -1.6 L0.7 -1.6 L3.1 -3.3 L3.2 0.2 Q3.1 3.1 0 3.3 Q-3.1 3.1 -3.2 0.2 Z" fill="#f28624"/><path d="M-2.6 -2.5 L-1.3 -1.5 L-2.6 -0.9Z M2.6 -2.5 L1.3 -1.5 L2.6 -0.9Z" fill="#fbb85a"/><path d="M-3.1 0.5 Q-1.6 0.1 0 1.2 Q1.6 0.1 3.1 0.5 Q2.8 3.1 0 3.3 Q-2.8 3.1 -3.1 0.5Z" fill="#f2c6a0"/><circle cx="-1.3" cy="-0.3" r="0.4" fill="#5a2a10"/><circle cx="1.3" cy="-0.3" r="0.4" fill="#5a2a10"/><circle cx="0" cy="1.6" r="0.45" fill="#8a4a5a"/></g>
<rect x="1250.50" y="549.60" width="131.20" height="148.60" rx="3.9" fill="#353535" filter="url(#sh)"/>
<path d="M1250.50 564.10 L1250.50 553.50 Q1250.50 549.60 1254.40 549.60 L1377.80 549.60 Q1381.70 549.60 1381.70 553.50 L1381.70 564.10Z" fill="#333"/>
<rect x="1250.50" y="563.60" width="131.20" height="0.8" fill="rgba(0,0,0,0.18)"/>
<circle cx="1257.60" cy="556.85" r="2.35" fill="#707070"/>
<text x="1264.30" y="559.30" font-size="6.77" fill="#999" text-anchor="start" font-family='"Liberation Sans", sans-serif' font-weight="normal" >Preview Image</text>
<circle cx="1254.90" cy="570.67" r="1.8" fill="#64b5f6"/>
<text x="1259.60" y="572.77" font-size="6.05" fill="#aaa" text-anchor="start" font-family='"Liberation Sans", sans-serif' font-weight="normal" >images</text>
<rect x="1255.0" y="576.25" width="122.0" height="121.95" fill="#fdfdfd"/>
<g transform="translate(1185.00,277.00) scale(1.0000)">
<path d="M-42.6 22 L42 22 Q43.2 36.5 37.5 39.2 Q0 40.8 -37.5 39.2 Q-43.6 36.5 -42.6 22Z" fill="#f39b3e" stroke="#111" stroke-width="2.4"/>
<path d="M-36 29.5 Q0 27.5 37 29.5 L36.5 32.5 Q0 30.8 -35.5 32.5Z" fill="#fcc886" opacity="0.85"/>
<path d="M-38 35 Q0 37.5 38 35 L37 37.8 Q0 39.5 -37 37.8Z" fill="#e07a20" opacity="0.7"/>
<rect x="-44.8" y="9.6" width="89.6" height="13.9" rx="6.8" fill="#8d4719" stroke="#111" stroke-width="2.4"/>
<path d="M-38 15 L-31 19 L-24 15 L-15 19.5 L-6 15.5 L4 19.5 L13 15.5 L22 19.5 L31 15.5 L38 18.5" fill="none" stroke="#b8692c" stroke-width="2" stroke-linejoin="round" opacity="0.85"/>
<path d="M-33 7.5 Q-20 11.5 -6 9 Q8 12 20 9 Q30 11 36 8 L35 11.5 Q24 13 14 12 Q2 14 -10 12 Q-24 13.5 -33 11Z" fill="#d63a22"/>
<path d="M-46.8 0.2 Q-40 -2.2 -31 0.4 Q-21 -1.6 -11 0.6 Q0 -1.6 11 0.6 Q21 -1.6 31 0.4 Q40 -2.2 46.8 0.2 L45.4 4.6 Q44 7.6 38 7.2 Q31 8.4 24 6.6 Q16 8.6 8 6.8 Q0 8.6 -8 6.8 Q-16 8.6 -24 6.6 Q-31 8.4 -38 7.2 Q-44 7.6 -45.4 4.6Z" fill="#46a93b" stroke="#111" stroke-width="1.9" stroke-linejoin="round"/>
<path d="M-42 3 Q-36 1.5 -30 3.5 M30 3.5 Q36 1.5 42 3" fill="none" stroke="#86d06a" stroke-width="1.2"/>
<g fill="#f6c52a" stroke="#111" stroke-width="1.3" stroke-linejoin="round"><path d="M-24.2 8.8 L-9 8.8 L-18.5 18.2Z"/><path d="M3.8 9.5 L20.4 9.5 L13.3 19.4Z"/><path d="M-26.8 1.4 L-5.1 1.4 L-18 10.5Z"/><path d="M6.3 1.4 L24.8 1.4 L15.3 9.9Z"/></g>
<path d="M-22 2.6 L-12 2.6 L-17 6Z M9 2.6 L18 2.6 L14 5.6Z" fill="#fde58a" opacity="0.7"/>
<ellipse cx="1" cy="1.8" rx="4.2" ry="1.8" fill="#e04a3a" stroke="#111" stroke-width="0.8"/>
<path d="M-42.8 -1.2 C-44.2 -22 -33 -39 0 -39 C33 -39 44.2 -22 42.8 -1.2 Q0 2.2 -42.8 -1.2Z" fill="#f2892a" stroke="#111" stroke-width="2.6"/>
<path d="M-38 -4 C-40 -20 -32 -34 -6 -36.5 C-24 -32 -33 -22 -33 -5Z" fill="#f8a752" opacity="0.8"/>
<path d="M20 -4 Q38 -6 39 -16 Q40 -6 38 -2.5 Q28 -1 20 -4Z" fill="#e06a14" opacity="0.7"/>
<ellipse cx="-28" cy="-13.5" rx="3" ry="2.2" fill="#fcd2a2" opacity="0.85"/>
<ellipse cx="-22" cy="-30" rx="1.2" ry="0.8" fill="#fcdcb0" opacity="0.9"/>
<ellipse cx="-12" cy="-33.5" rx="1.2" ry="0.8" fill="#fcdcb0" opacity="0.9"/>
<ellipse cx="-3" cy="-35" rx="1.2" ry="0.8" fill="#fcdcb0" opacity="0.9"/>
<ellipse cx="8" cy="-34" rx="1.2" ry="0.8" fill="#fcdcb0" opacity="0.9"/>
<ellipse cx="17" cy="-31" rx="1.2" ry="0.8" fill="#fcdcb0" opacity="0.9"/>
<ellipse cx="26" cy="-27" rx="1.2" ry="0.8" fill="#fcdcb0" opacity="0.9"/>
<ellipse cx="-31" cy="-21" rx="1.2" ry="0.8" fill="#fcdcb0" opacity="0.9"/>
<ellipse cx="-19" cy="-25" rx="1.2" ry="0.8" fill="#fcdcb0" opacity="0.9"/>
<ellipse cx="-7" cy="-28" rx="1.2" ry="0.8" fill="#fcdcb0" opacity="0.9"/>
<ellipse cx="5" cy="-27" rx="1.2" ry="0.8" fill="#fcdcb0" opacity="0.9"/>
<ellipse cx="15" cy="-23" rx="1.2" ry="0.8" fill="#fcdcb0" opacity="0.9"/>
<ellipse cx="27" cy="-19" rx="1.2" ry="0.8" fill="#fcdcb0" opacity="0.9"/>
<ellipse cx="-25" cy="-15" rx="1.2" ry="0.8" fill="#fcdcb0" opacity="0.9"/>
<ellipse cx="-11" cy="-19" rx="1.2" ry="0.8" fill="#fcdcb0" opacity="0.9"/>
<ellipse cx="1" cy="-19.5" rx="1.2" ry="0.8" fill="#fcdcb0" opacity="0.9"/>
<ellipse cx="13" cy="-15.5" rx="1.2" ry="0.8" fill="#fcdcb0" opacity="0.9"/>
<ellipse cx="22" cy="-11" rx="1.2" ry="0.8" fill="#fcdcb0" opacity="0.9"/>
<ellipse cx="33" cy="-14" rx="1.2" ry="0.8" fill="#fcdcb0" opacity="0.9"/>
<ellipse cx="-14" cy="-10" rx="1.2" ry="0.8" fill="#fcdcb0" opacity="0.9"/>
<ellipse cx="6" cy="-10" rx="1.2" ry="0.8" fill="#fcdcb0" opacity="0.9"/>
<ellipse cx="32" cy="-24" rx="1.2" ry="0.8" fill="#fcdcb0" opacity="0.9"/>
<ellipse cx="-4" cy="-13" rx="1.2" ry="0.8" fill="#fcdcb0" opacity="0.9"/>
</g>
<g transform="translate(1316.10,636.30) scale(0.4700)">
<path d="M-42.6 22 L42 22 Q43.2 36.5 37.5 39.2 Q0 40.8 -37.5 39.2 Q-43.6 36.5 -42.6 22Z" fill="#f39b3e" stroke="#111" stroke-width="2.4"/>
<path d="M-36 29.5 Q0 27.5 37 29.5 L36.5 32.5 Q0 30.8 -35.5 32.5Z" fill="#fcc886" opacity="0.85"/>
<path d="M-38 35 Q0 37.5 38 35 L37 37.8 Q0 39.5 -37 37.8Z" fill="#e07a20" opacity="0.7"/>
<rect x="-44.8" y="9.6" width="89.6" height="13.9" rx="6.8" fill="#8d4719" stroke="#111" stroke-width="2.4"/>
<path d="M-38 15 L-31 19 L-24 15 L-15 19.5 L-6 15.5 L4 19.5 L13 15.5 L22 19.5 L31 15.5 L38 18.5" fill="none" stroke="#b8692c" stroke-width="2" stroke-linejoin="round" opacity="0.85"/>
<path d="M-33 7.5 Q-20 11.5 -6 9 Q8 12 20 9 Q30 11 36 8 L35 11.5 Q24 13 14 12 Q2 14 -10 12 Q-24 13.5 -33 11Z" fill="#d63a22"/>
<path d="M-46.8 0.2 Q-40 -2.2 -31 0.4 Q-21 -1.6 -11 0.6 Q0 -1.6 11 0.6 Q21 -1.6 31 0.4 Q40 -2.2 46.8 0.2 L45.4 4.6 Q44 7.6 38 7.2 Q31 8.4 24 6.6 Q16 8.6 8 6.8 Q0 8.6 -8 6.8 Q-16 8.6 -24 6.6 Q-31 8.4 -38 7.2 Q-44 7.6 -45.4 4.6Z" fill="#46a93b" stroke="#111" stroke-width="1.9" stroke-linejoin="round"/>
<path d="M-42 3 Q-36 1.5 -30 3.5 M30 3.5 Q36 1.5 42 3" fill="none" stroke="#86d06a" stroke-width="1.2"/>
<g fill="#f6c52a" stroke="#111" stroke-width="1.3" stroke-linejoin="round"><path d="M-24.2 8.8 L-9 8.8 L-18.5 18.2Z"/><path d="M3.8 9.5 L20.4 9.5 L13.3 19.4Z"/><path d="M-26.8 1.4 L-5.1 1.4 L-18 10.5Z"/><path d="M6.3 1.4 L24.8 1.4 L15.3 9.9Z"/></g>
<path d="M-22 2.6 L-12 2.6 L-17 6Z M9 2.6 L18 2.6 L14 5.6Z" fill="#fde58a" opacity="0.7"/>
<ellipse cx="1" cy="1.8" rx="4.2" ry="1.8" fill="#e04a3a" stroke="#111" stroke-width="0.8"/>
<path d="M-42.8 -1.2 C-44.2 -22 -33 -39 0 -39 C33 -39 44.2 -22 42.8 -1.2 Q0 2.2 -42.8 -1.2Z" fill="#f2892a" stroke="#111" stroke-width="2.6"/>
<path d="M-38 -4 C-40 -20 -32 -34 -6 -36.5 C-24 -32 -33 -22 -33 -5Z" fill="#f8a752" opacity="0.8"/>
<path d="M20 -4 Q38 -6 39 -16 Q40 -6 38 -2.5 Q28 -1 20 -4Z" fill="#e06a14" opacity="0.7"/>
<ellipse cx="-28" cy="-13.5" rx="3" ry="2.2" fill="#fcd2a2" opacity="0.85"/>
<ellipse cx="-22" cy="-30" rx="1.2" ry="0.8" fill="#fcdcb0" opacity="0.9"/>
<ellipse cx="-12" cy="-33.5" rx="1.2" ry="0.8" fill="#fcdcb0" opacity="0.9"/>
<ellipse cx="-3" cy="-35" rx="1.2" ry="0.8" fill="#fcdcb0" opacity="0.9"/>
<ellipse cx="8" cy="-34" rx="1.2" ry="0.8" fill="#fcdcb0" opacity="0.9"/>
<ellipse cx="17" cy="-31" rx="1.2" ry="0.8" fill="#fcdcb0" opacity="0.9"/>
<ellipse cx="26" cy="-27" rx="1.2" ry="0.8" fill="#fcdcb0" opacity="0.9"/>
<ellipse cx="-31" cy="-21" rx="1.2" ry="0.8" fill="#fcdcb0" opacity="0.9"/>
<ellipse cx="-19" cy="-25" rx="1.2" ry="0.8" fill="#fcdcb0" opacity="0.9"/>
<ellipse cx="-7" cy="-28" rx="1.2" ry="0.8" fill="#fcdcb0" opacity="0.9"/>
<ellipse cx="5" cy="-27" rx="1.2" ry="0.8" fill="#fcdcb0" opacity="0.9"/>
<ellipse cx="15" cy="-23" rx="1.2" ry="0.8" fill="#fcdcb0" opacity="0.9"/>
<ellipse cx="27" cy="-19" rx="1.2" ry="0.8" fill="#fcdcb0" opacity="0.9"/>
<ellipse cx="-25" cy="-15" rx="1.2" ry="0.8" fill="#fcdcb0" opacity="0.9"/>
<ellipse cx="-11" cy="-19" rx="1.2" ry="0.8" fill="#fcdcb0" opacity="0.9"/>
<ellipse cx="1" cy="-19.5" rx="1.2" ry="0.8" fill="#fcdcb0" opacity="0.9"/>
<ellipse cx="13" cy="-15.5" rx="1.2" ry="0.8" fill="#fcdcb0" opacity="0.9"/>
<ellipse cx="22" cy="-11" rx="1.2" ry="0.8" fill="#fcdcb0" opacity="0.9"/>
<ellipse cx="33" cy="-14" rx="1.2" ry="0.8" fill="#fcdcb0" opacity="0.9"/>
<ellipse cx="-14" cy="-10" rx="1.2" ry="0.8" fill="#fcdcb0" opacity="0.9"/>
<ellipse cx="6" cy="-10" rx="1.2" ry="0.8" fill="#fcdcb0" opacity="0.9"/>
<ellipse cx="32" cy="-24" rx="1.2" ry="0.8" fill="#fcdcb0" opacity="0.9"/>
<ellipse cx="-4" cy="-13" rx="1.2" ry="0.8" fill="#fcdcb0" opacity="0.9"/>
</g>
<rect x="0" y="0" width="1536" height="10.9" fill="url(#topbar)"/>
<text x="4.00" y="8.20" font-size="7.60" fill="#eee" text-anchor="start" font-family='"Liberation Sans", sans-serif' font-weight="bold" >Idle</text>
<g fill="#aaa"><rect x="1516.5" y="11.2" width="11.4" height="1.5"/><rect x="1516.5" y="14.4" width="11.4" height="1.5"/><rect x="1516.5" y="17.6" width="11.4" height="1.5"/></g>
<text x="10.70" y="817.40" font-size="7.60" fill="#888" text-anchor="start" font-family='"Liberation Sans", sans-serif' font-weight="normal" >T: 0.00s</text>
<text x="10.70" y="826.47" font-size="7.60" fill="#888" text-anchor="start" font-family='"Liberation Sans", sans-serif' font-weight="normal" >I: 0</text>
<text x="10.70" y="835.54" font-size="7.60" fill="#888" text-anchor="start" font-family='"Liberation Sans", sans-serif' font-weight="normal" >N: 19 [19]</text>
<text x="10.70" y="844.61" font-size="7.60" fill="#888" text-anchor="start" font-family='"Liberation Sans", sans-serif' font-weight="normal" >V: 41</text>
<text x="10.70" y="853.68" font-size="7.60" fill="#888" text-anchor="start" font-family='"Liberation Sans", sans-serif' font-weight="normal" >FPS:55.56</text>
</svg></body></html>
